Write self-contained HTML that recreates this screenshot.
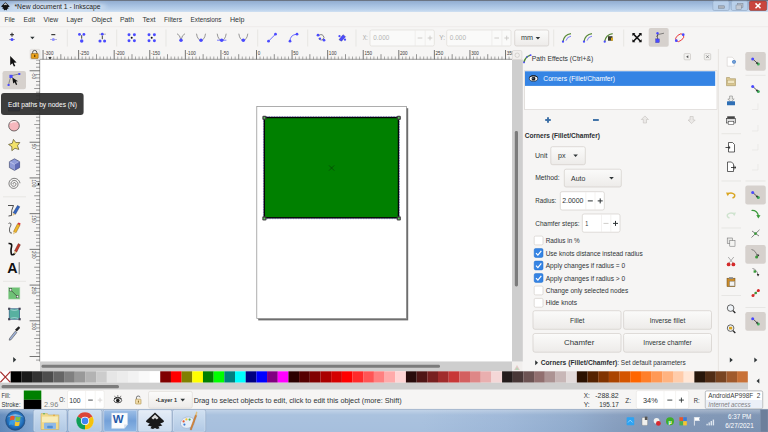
<!DOCTYPE html>
<html lang="en"><head><meta charset="utf-8"><title>*New document 1 - Inkscape</title>
<style>
html,body{margin:0;padding:0;background:#f6f5f4;overflow:hidden}
svg{display:block;font-family:"Liberation Sans",sans-serif}
text{white-space:pre}
</style></head><body>
<svg width="768" height="432" viewBox="0 0 768 432">
<defs>
<linearGradient id="gt" x1="0" y1="0" x2="0" y2="1"><stop offset="0" stop-color="#8ea9cd"/><stop offset="0.4" stop-color="#a3bedf"/><stop offset="0.8" stop-color="#bad1eb"/><stop offset="1" stop-color="#d0e0f2"/></linearGradient>
<linearGradient id="gb" x1="0" y1="0" x2="0" y2="1"><stop offset="0" stop-color="#fbfbfa"/><stop offset="1" stop-color="#edebe9"/></linearGradient>
<linearGradient id="gtb" gradientUnits="userSpaceOnUse" x1="0" y1="0" x2="768" y2="0"><stop offset="0" stop-color="#5f88ba"/><stop offset="0.05" stop-color="#86a9d2"/><stop offset="0.14" stop-color="#a6bfdd"/><stop offset="0.55" stop-color="#a6bfdd"/><stop offset="0.66" stop-color="#9cb6d7"/><stop offset="0.75" stop-color="#8faacc"/><stop offset="0.80" stop-color="#859dbe"/><stop offset="0.84" stop-color="#7f96b6"/><stop offset="1" stop-color="#7a91b1"/></linearGradient>
<linearGradient id="gtbv" x1="0" y1="0" x2="0" y2="1"><stop offset="0" stop-color="#ffffff" stop-opacity="0.35"/><stop offset="0.25" stop-color="#ffffff" stop-opacity="0.05"/><stop offset="1" stop-color="#ffffff" stop-opacity="0"/></linearGradient>
<linearGradient id="gtk" x1="0" y1="0" x2="0" y2="1"><stop offset="0" stop-color="#d4e3f3"/><stop offset="1" stop-color="#b3cbe6"/></linearGradient>
<linearGradient id="gtw" x1="0" y1="0" x2="0" y2="1"><stop offset="0" stop-color="#9dbfe8"/><stop offset="0.5" stop-color="#6f9ed8"/><stop offset="1" stop-color="#8bb6e6"/></linearGradient>
<linearGradient id="gta" x1="0" y1="0" x2="0" y2="1"><stop offset="0" stop-color="#eaf1f9"/><stop offset="1" stop-color="#cfdff1"/></linearGradient>
<radialGradient id="orb" cx="0.5" cy="0.45" r="0.6"><stop offset="0" stop-color="#5fb4ee"/><stop offset="0.7" stop-color="#1f6cb8"/><stop offset="1" stop-color="#123f7a"/></radialGradient>
<filter id="blur" x="-20%" y="-100%" width="140%" height="300%"><feGaussianBlur stdDeviation="2.2"/></filter>
</defs>
<rect x="0.00" y="0.00" width="768.00" height="432.00" fill="#f6f5f4" />
<rect x="0.00" y="0.00" width="768.00" height="12.00" fill="url(#gt)" />
<rect x="0.00" y="0.00" width="768.00" height="0.80" fill="#626872" />
<ellipse cx="57" cy="6.3" rx="50" ry="3.6" fill="#ffffff" opacity="0.55" filter="url(#blur)"/>
<g transform="translate(-1.2 0.6) scale(0.88)">
<path d="M7.5 1.8 L12 6 Q12.6 7 11.5 7.4 L10 7.8 L11.2 9 L9 9.6 L9.6 10.6 L8.4 11 L7.5 10.4 L6.6 11 L5.4 10.6 L6 9.6 L3.8 9 L5 7.8 L3.5 7.4 Q2.4 7 3 6 Z" fill="#151515" />
<path d="M7.5 2.8 L9.4 4.6 L8.4 5.3 L7.5 4.6 L6.6 5.3 L5.6 4.6 Z" fill="#ffffff" opacity="0.8" />
</g>
<text x="14.50" y="8.78" font-size="6.9" fill="#1c1c1c" textLength="86.00" lengthAdjust="spacingAndGlyphs" >*New document 1 - Inkscape</text>
<rect x="712.80" y="1.00" width="16.40" height="9.50" fill="#b9d0ea" rx="1.5" stroke="#8fa6c2" stroke-width="0.6" />
<rect x="718.20" y="5.80" width="6.40" height="2.60" fill="#a9b0ba" stroke="#6f7a8a" stroke-width="0.4" />
<rect x="731.30" y="1.00" width="16.40" height="9.50" fill="#b9d0ea" rx="1.5" stroke="#8fa6c2" stroke-width="0.6" />
<rect x="737.80" y="3.30" width="5.20" height="4.20" fill="#b4bcc7" stroke="#6f7a8a" stroke-width="0.4" />
<rect x="736.00" y="5.00" width="5.20" height="4.20" fill="#c3cad4" stroke="#6f7a8a" stroke-width="0.4" />
<rect x="749.40" y="1.00" width="17.20" height="9.50" fill="#c9453d" rx="1.5" stroke="#8d3a36" stroke-width="0.6" />
<path d="M755.5 3.4 L760.5 8.2 M760.5 3.4 L755.5 8.2" fill="none" stroke="#ffffff" stroke-width="1.5" />
<rect x="0.00" y="12.00" width="768.00" height="15.00" fill="#f6f5f4" />
<text x="4.50" y="21.71" font-size="6.7" fill="#2e3436" textLength="10.50" lengthAdjust="spacingAndGlyphs" >File</text>
<text x="23.50" y="21.71" font-size="6.7" fill="#2e3436" textLength="11.50" lengthAdjust="spacingAndGlyphs" >Edit</text>
<text x="43.50" y="21.71" font-size="6.7" fill="#2e3436" textLength="14.50" lengthAdjust="spacingAndGlyphs" >View</text>
<text x="66.50" y="21.71" font-size="6.7" fill="#2e3436" textLength="16.50" lengthAdjust="spacingAndGlyphs" >Layer</text>
<text x="91.50" y="21.71" font-size="6.7" fill="#2e3436" textLength="20.50" lengthAdjust="spacingAndGlyphs" >Object</text>
<text x="120.00" y="21.71" font-size="6.7" fill="#2e3436" textLength="14.00" lengthAdjust="spacingAndGlyphs" >Path</text>
<text x="142.50" y="21.71" font-size="6.7" fill="#2e3436" textLength="13.00" lengthAdjust="spacingAndGlyphs" >Text</text>
<text x="164.00" y="21.71" font-size="6.7" fill="#2e3436" textLength="18.00" lengthAdjust="spacingAndGlyphs" >Filters</text>
<text x="190.50" y="21.71" font-size="6.7" fill="#2e3436" textLength="31.00" lengthAdjust="spacingAndGlyphs" >Extensions</text>
<text x="230.00" y="21.71" font-size="6.7" fill="#2e3436" textLength="14.50" lengthAdjust="spacingAndGlyphs" >Help</text>
<line x1="0.00" y1="26.70" x2="768.00" y2="26.70" stroke="#e6e3e0" stroke-width="0.5" />
<line x1="9.00" y1="39.50" x2="15.00" y2="39.50" stroke="#6b6b9a" stroke-width="0.6" />
<circle cx="12.00" cy="39.50" r="1.5" fill="#4a4aff"/>
<path d="M12 32.7 V36.7 M10 34.7 H14" fill="none" stroke="#111" stroke-width="0.9" />
<path d="M30.2 36.7 h4.4 l-2.2 2.6 z" fill="#2e3436" />
<line x1="50.00" y1="39.50" x2="57.00" y2="39.50" stroke="#8b8bb8" stroke-width="0.6" />
<circle cx="53.30" cy="39.50" r="1.5" fill="#8f8fff"/>
<line x1="51.30" y1="34.70" x2="55.30" y2="34.70" stroke="#111" stroke-width="1" />
<line x1="67.30" y1="29.50" x2="67.30" y2="46.50" stroke="#dedbd8" stroke-width="0.6" />
<circle cx="79.50" cy="34.40" r="1.426" fill="#4a4aff"/>
<circle cx="83.90" cy="34.40" r="1.426" fill="#4a4aff"/>
<circle cx="81.70" cy="41.00" r="1.736" fill="#4a4aff"/>
<path d="M81.7 35.2 V38.7" fill="none" stroke="#111" stroke-width="0.8" />
<line x1="99.00" y1="34.20" x2="106.00" y2="34.20" stroke="#777" stroke-width="0.5" />
<circle cx="102.30" cy="34.20" r="1.364" fill="#4a4aff"/>
<circle cx="100.00" cy="41.00" r="1.55" fill="#4a4aff"/>
<circle cx="104.60" cy="41.00" r="1.55" fill="#4a4aff"/>
<path d="M102.3 35.7 V39.2" fill="none" stroke="#111" stroke-width="0.8" />
<line x1="116.70" y1="29.50" x2="116.70" y2="46.50" stroke="#dedbd8" stroke-width="0.6" />
<circle cx="129.00" cy="34.70" r="1.488" fill="#4a4aff"/>
<circle cx="129.00" cy="40.70" r="1.488" fill="#4a4aff"/>
<circle cx="134.40" cy="34.70" r="1.488" fill="#4a4aff"/>
<circle cx="134.40" cy="40.70" r="1.488" fill="#4a4aff"/>
<circle cx="131.70" cy="37.70" r="0.992" fill="#111"/>
<circle cx="149.00" cy="34.70" r="1.488" fill="#4a4aff"/>
<circle cx="149.00" cy="40.70" r="1.488" fill="#4a4aff"/>
<circle cx="154.40" cy="34.70" r="1.488" fill="#4a4aff"/>
<circle cx="154.40" cy="40.70" r="1.488" fill="#4a4aff"/>
<circle cx="151.70" cy="37.70" r="0.992" fill="#111"/>
<line x1="166.00" y1="29.50" x2="166.00" y2="46.50" stroke="#dedbd8" stroke-width="0.6" />
<path d="M177 33.7 Q180 34.7 181 40.2 Q182 34.7 185 33.7" fill="none" stroke="#555" stroke-width="0.6" />
<circle cx="181.00" cy="40.20" r="1.736" fill="#4a4aff"/>
<path d="M196.5 33.7 Q197.5 40.2 201 40.2 Q204.5 40.2 205.5 33.7" fill="none" stroke="#555" stroke-width="0.6" />
<circle cx="201.00" cy="40.20" r="1.736" fill="#4a4aff"/>
<path d="M217.2 33.7 Q218.2 40.2 221.7 40.2 Q225.2 40.2 226.2 33.7" fill="none" stroke="#555" stroke-width="0.6" />
<circle cx="221.70" cy="40.20" r="1.736" fill="#4a4aff"/>
<line x1="217.00" y1="40.20" x2="226.40" y2="40.20" stroke="#4a4aff" stroke-width="0.7" />
<path d="M238.8 33.7 Q239.8 40.2 243.3 40.2 Q246.8 40.2 247.8 33.7" fill="none" stroke="#555" stroke-width="0.6" />
<circle cx="243.30" cy="40.20" r="1.736" fill="#4a4aff"/>
<line x1="257.70" y1="29.50" x2="257.70" y2="46.50" stroke="#dedbd8" stroke-width="0.6" />
<path d="M268.5 41.2 L275.5 34.2" fill="none" stroke="#4a4aff" stroke-width="0.8" />
<circle cx="268.50" cy="41.20" r="1.364" fill="#4a4aff"/>
<circle cx="275.50" cy="34.20" r="1.364" fill="#4a4aff"/>
<path d="M290 41.2 Q290 34.7 297 34.2" fill="none" stroke="#4a4aff" stroke-width="0.8" />
<circle cx="290.00" cy="41.20" r="1.364" fill="#4a4aff"/>
<circle cx="297.00" cy="34.20" r="1.364" fill="#4a4aff"/>
<line x1="307.70" y1="29.50" x2="307.70" y2="46.50" stroke="#dedbd8" stroke-width="0.6" />
<path d="M318 35.7 Q323 32.7 324 37.7 Q322 41.7 318.5 38.7" fill="none" stroke="#555" stroke-width="0.7" />
<circle cx="318.00" cy="35.20" r="1.364" fill="#4a4aff"/>
<circle cx="324.00" cy="40.20" r="1.364" fill="#4a4aff"/>
<circle cx="320.00" cy="38.70" r="1.116" fill="#4a4aff"/>
<path d="M339 39.7 L343 34.7 L345.5 36.7 L341.5 41.2 Z" fill="#4a4aff" stroke="#23238a" stroke-width="0.4" />
<circle cx="339.50" cy="36.20" r="1.116" fill="#4a4aff"/>
<circle cx="345.00" cy="39.70" r="1.116" fill="#4a4aff"/>
<line x1="356.00" y1="29.50" x2="356.00" y2="46.50" stroke="#dedbd8" stroke-width="0.6" />
<text x="362.70" y="40.41" font-size="6.7" fill="#a5a6a5" textLength="5.10" lengthAdjust="spacingAndGlyphs" >X:</text>
<rect x="370.00" y="30.00" width="64.30" height="16.00" fill="#fafaf9" rx="1.6" stroke="#dcd8d4" stroke-width="0.6" />
<text x="373.30" y="40.41" font-size="6.7" fill="#b4b5b4" textLength="16.00" lengthAdjust="spacingAndGlyphs" >0.000</text>
<line x1="415.20" y1="30.40" x2="415.20" y2="45.60" stroke="#e4e1de" stroke-width="0.5" />
<line x1="425.20" y1="30.40" x2="425.20" y2="45.60" stroke="#e4e1de" stroke-width="0.5" />
<line x1="417.70" y1="38.00" x2="422.30" y2="38.00" stroke="#c4c2bf" stroke-width="0.8" />
<line x1="427.70" y1="38.00" x2="432.30" y2="38.00" stroke="#c4c2bf" stroke-width="0.8" />
<line x1="430.00" y1="35.70" x2="430.00" y2="40.30" stroke="#c4c2bf" stroke-width="0.8" />
<text x="439.30" y="40.41" font-size="6.7" fill="#a5a6a5" textLength="5.70" lengthAdjust="spacingAndGlyphs" >Y:</text>
<rect x="446.70" y="30.00" width="64.30" height="16.00" fill="#fafaf9" rx="1.6" stroke="#dcd8d4" stroke-width="0.6" />
<text x="449.80" y="40.41" font-size="6.7" fill="#b4b5b4" textLength="16.20" lengthAdjust="spacingAndGlyphs" >0.000</text>
<line x1="491.90" y1="30.40" x2="491.90" y2="45.60" stroke="#e4e1de" stroke-width="0.5" />
<line x1="501.90" y1="30.40" x2="501.90" y2="45.60" stroke="#e4e1de" stroke-width="0.5" />
<line x1="494.40" y1="38.00" x2="499.00" y2="38.00" stroke="#c4c2bf" stroke-width="0.8" />
<line x1="504.40" y1="38.00" x2="509.00" y2="38.00" stroke="#c4c2bf" stroke-width="0.8" />
<line x1="506.70" y1="35.70" x2="506.70" y2="40.30" stroke="#c4c2bf" stroke-width="0.8" />
<rect x="514.70" y="30.00" width="34.00" height="16.00" fill="url(#gb)" rx="1.8" stroke="#cdc7c2" stroke-width="0.6" />
<text x="521.00" y="40.41" font-size="6.7" fill="#2e3436" textLength="12.00" lengthAdjust="spacingAndGlyphs" >mm</text>
<path d="M535.6 36.9 h4.6 l-2.3 2.6 z" fill="#2e3436" />
<line x1="553.70" y1="29.50" x2="553.70" y2="46.50" stroke="#dedbd8" stroke-width="0.6" />
<path d="M563 41.7 Q564 34.7 571 33.7" fill="none" stroke="#5a8a3a" stroke-width="1.3" />
<path d="M566 40.7 Q567 36.7 571 36.2" fill="none" stroke="#4a4aff" stroke-width="0.7" />
<circle cx="563.00" cy="41.70" r="1.116" fill="#4a4aff"/>
<path d="M584 41.7 Q585 34.7 592 33.7" fill="none" stroke="#5a8a3a" stroke-width="1.3" />
<path d="M587 40.7 Q588 36.7 592 36.2" fill="none" stroke="#4a4aff" stroke-width="0.7" />
<circle cx="584.00" cy="41.70" r="1.116" fill="#4a4aff"/>
<path d="M604.7 41.7 Q605.7 34.7 612.7 33.7" fill="none" stroke="#5a8a3a" stroke-width="1.3" />
<rect x="608.00" y="36.20" width="4.50" height="4.50" fill="#3a3a2a" />
<rect x="611.00" y="37.70" width="2.00" height="3.00" fill="#d9a520" />
<circle cx="604.70" cy="41.70" r="1.116" fill="#4a4aff"/>
<line x1="623.70" y1="29.50" x2="623.70" y2="46.50" stroke="#dedbd8" stroke-width="0.6" />
<path d="M633.2 33.900000000000006 L640.8 41.5 M640.8 33.900000000000006 L633.2 41.5" fill="none" stroke="#111" stroke-width="1.5" />
<path d="M632.4000000000001 33.10000000000001 L635.4000000000001 33.10000000000001 L632.4000000000001 36.10000000000001 Z" fill="#111" />
<path d="M632.4000000000001 42.3 L635.4000000000001 42.3 L632.4000000000001 39.3 Z" fill="#111" />
<path d="M641.5999999999999 33.10000000000001 L638.5999999999999 33.10000000000001 L641.5999999999999 36.10000000000001 Z" fill="#111" />
<path d="M641.5999999999999 42.3 L638.5999999999999 42.3 L641.5999999999999 39.3 Z" fill="#111" />
<rect x="648.70" y="28.00" width="20.00" height="18.70" fill="#d6d1cd" rx="2" />
<path d="M656 36.7 Q658 33.7 664 33.2" fill="none" stroke="#444" stroke-width="0.6" />
<line x1="657.50" y1="33.70" x2="657.50" y2="39.70" stroke="#333" stroke-width="0.6" />
<circle cx="657.50" cy="33.20" r="1.2" fill="#4a4aff"/>
<rect x="655.80" y="38.90" width="3.40" height="3.60" fill="#4a4aff" stroke="#2222aa" stroke-width="0.4" />
<ellipse cx="679.7" cy="37.7" rx="4.6" ry="3" fill="none" stroke="#e8363a" stroke-width="0.9" transform="rotate(-40 679.7 37.7)"/>
<circle cx="676.30" cy="40.70" r="1.364" fill="#4a4aff"/>
<circle cx="683.20" cy="34.70" r="1.364" fill="#4a4aff"/>
<rect x="40.00" y="59.50" width="472.00" height="302.00" fill="#ffffff" />
<rect x="40.00" y="49.50" width="472.00" height="10.00" fill="#f6f5f4" />
<rect x="30.00" y="59.50" width="10.00" height="302.00" fill="#f6f5f4" />
<line x1="40.00" y1="59.30" x2="512.00" y2="59.30" stroke="#777" stroke-width="0.7" />
<line x1="39.70" y1="59.50" x2="39.70" y2="361.50" stroke="#777" stroke-width="0.7" />
<line x1="43.05" y1="50.00" x2="43.05" y2="59.40" stroke="#4a4a4a" stroke-width="0.75" />
<text x="44.25" y="54.86" font-size="4.6" fill="#3a3a3a" >-300</text>
<line x1="46.61" y1="56.50" x2="46.61" y2="59.40" stroke="#4a4a4a" stroke-width="0.65" opacity="0.7" />
<line x1="50.16" y1="56.50" x2="50.16" y2="59.40" stroke="#4a4a4a" stroke-width="0.65" opacity="0.7" />
<line x1="53.72" y1="56.50" x2="53.72" y2="59.40" stroke="#4a4a4a" stroke-width="0.65" opacity="0.7" />
<line x1="57.28" y1="56.50" x2="57.28" y2="59.40" stroke="#4a4a4a" stroke-width="0.65" opacity="0.7" />
<line x1="60.84" y1="54.20" x2="60.84" y2="59.40" stroke="#4a4a4a" stroke-width="0.7" opacity="0.85" />
<line x1="64.39" y1="56.50" x2="64.39" y2="59.40" stroke="#4a4a4a" stroke-width="0.65" opacity="0.7" />
<line x1="67.95" y1="56.50" x2="67.95" y2="59.40" stroke="#4a4a4a" stroke-width="0.65" opacity="0.7" />
<line x1="71.51" y1="56.50" x2="71.51" y2="59.40" stroke="#4a4a4a" stroke-width="0.65" opacity="0.7" />
<line x1="75.07" y1="56.50" x2="75.07" y2="59.40" stroke="#4a4a4a" stroke-width="0.65" opacity="0.7" />
<line x1="78.62" y1="50.00" x2="78.62" y2="59.40" stroke="#4a4a4a" stroke-width="0.75" />
<text x="79.83" y="54.86" font-size="4.6" fill="#3a3a3a" >-250</text>
<line x1="82.18" y1="56.50" x2="82.18" y2="59.40" stroke="#4a4a4a" stroke-width="0.65" opacity="0.7" />
<line x1="85.74" y1="56.50" x2="85.74" y2="59.40" stroke="#4a4a4a" stroke-width="0.65" opacity="0.7" />
<line x1="89.30" y1="56.50" x2="89.30" y2="59.40" stroke="#4a4a4a" stroke-width="0.65" opacity="0.7" />
<line x1="92.85" y1="56.50" x2="92.85" y2="59.40" stroke="#4a4a4a" stroke-width="0.65" opacity="0.7" />
<line x1="96.41" y1="54.20" x2="96.41" y2="59.40" stroke="#4a4a4a" stroke-width="0.7" opacity="0.85" />
<line x1="99.97" y1="56.50" x2="99.97" y2="59.40" stroke="#4a4a4a" stroke-width="0.65" opacity="0.7" />
<line x1="103.53" y1="56.50" x2="103.53" y2="59.40" stroke="#4a4a4a" stroke-width="0.65" opacity="0.7" />
<line x1="107.09" y1="56.50" x2="107.09" y2="59.40" stroke="#4a4a4a" stroke-width="0.65" opacity="0.7" />
<line x1="110.64" y1="56.50" x2="110.64" y2="59.40" stroke="#4a4a4a" stroke-width="0.65" opacity="0.7" />
<line x1="114.20" y1="50.00" x2="114.20" y2="59.40" stroke="#4a4a4a" stroke-width="0.75" />
<text x="115.40" y="54.86" font-size="4.6" fill="#3a3a3a" >-200</text>
<line x1="117.76" y1="56.50" x2="117.76" y2="59.40" stroke="#4a4a4a" stroke-width="0.65" opacity="0.7" />
<line x1="121.31" y1="56.50" x2="121.31" y2="59.40" stroke="#4a4a4a" stroke-width="0.65" opacity="0.7" />
<line x1="124.87" y1="56.50" x2="124.87" y2="59.40" stroke="#4a4a4a" stroke-width="0.65" opacity="0.7" />
<line x1="128.43" y1="56.50" x2="128.43" y2="59.40" stroke="#4a4a4a" stroke-width="0.65" opacity="0.7" />
<line x1="131.99" y1="54.20" x2="131.99" y2="59.40" stroke="#4a4a4a" stroke-width="0.7" opacity="0.85" />
<line x1="135.55" y1="56.50" x2="135.55" y2="59.40" stroke="#4a4a4a" stroke-width="0.65" opacity="0.7" />
<line x1="139.10" y1="56.50" x2="139.10" y2="59.40" stroke="#4a4a4a" stroke-width="0.65" opacity="0.7" />
<line x1="142.66" y1="56.50" x2="142.66" y2="59.40" stroke="#4a4a4a" stroke-width="0.65" opacity="0.7" />
<line x1="146.22" y1="56.50" x2="146.22" y2="59.40" stroke="#4a4a4a" stroke-width="0.65" opacity="0.7" />
<line x1="149.77" y1="50.00" x2="149.77" y2="59.40" stroke="#4a4a4a" stroke-width="0.75" />
<text x="150.97" y="54.86" font-size="4.6" fill="#3a3a3a" >-150</text>
<line x1="153.33" y1="56.50" x2="153.33" y2="59.40" stroke="#4a4a4a" stroke-width="0.65" opacity="0.7" />
<line x1="156.89" y1="56.50" x2="156.89" y2="59.40" stroke="#4a4a4a" stroke-width="0.65" opacity="0.7" />
<line x1="160.45" y1="56.50" x2="160.45" y2="59.40" stroke="#4a4a4a" stroke-width="0.65" opacity="0.7" />
<line x1="164.00" y1="56.50" x2="164.00" y2="59.40" stroke="#4a4a4a" stroke-width="0.65" opacity="0.7" />
<line x1="167.56" y1="54.20" x2="167.56" y2="59.40" stroke="#4a4a4a" stroke-width="0.7" opacity="0.85" />
<line x1="171.12" y1="56.50" x2="171.12" y2="59.40" stroke="#4a4a4a" stroke-width="0.65" opacity="0.7" />
<line x1="174.68" y1="56.50" x2="174.68" y2="59.40" stroke="#4a4a4a" stroke-width="0.65" opacity="0.7" />
<line x1="178.24" y1="56.50" x2="178.24" y2="59.40" stroke="#4a4a4a" stroke-width="0.65" opacity="0.7" />
<line x1="181.79" y1="56.50" x2="181.79" y2="59.40" stroke="#4a4a4a" stroke-width="0.65" opacity="0.7" />
<line x1="185.35" y1="50.00" x2="185.35" y2="59.40" stroke="#4a4a4a" stroke-width="0.75" />
<text x="186.55" y="54.86" font-size="4.6" fill="#3a3a3a" >-100</text>
<line x1="188.91" y1="56.50" x2="188.91" y2="59.40" stroke="#4a4a4a" stroke-width="0.65" opacity="0.7" />
<line x1="192.47" y1="56.50" x2="192.47" y2="59.40" stroke="#4a4a4a" stroke-width="0.65" opacity="0.7" />
<line x1="196.02" y1="56.50" x2="196.02" y2="59.40" stroke="#4a4a4a" stroke-width="0.65" opacity="0.7" />
<line x1="199.58" y1="56.50" x2="199.58" y2="59.40" stroke="#4a4a4a" stroke-width="0.65" opacity="0.7" />
<line x1="203.14" y1="54.20" x2="203.14" y2="59.40" stroke="#4a4a4a" stroke-width="0.7" opacity="0.85" />
<line x1="206.69" y1="56.50" x2="206.69" y2="59.40" stroke="#4a4a4a" stroke-width="0.65" opacity="0.7" />
<line x1="210.25" y1="56.50" x2="210.25" y2="59.40" stroke="#4a4a4a" stroke-width="0.65" opacity="0.7" />
<line x1="213.81" y1="56.50" x2="213.81" y2="59.40" stroke="#4a4a4a" stroke-width="0.65" opacity="0.7" />
<line x1="217.37" y1="56.50" x2="217.37" y2="59.40" stroke="#4a4a4a" stroke-width="0.65" opacity="0.7" />
<line x1="220.93" y1="50.00" x2="220.93" y2="59.40" stroke="#4a4a4a" stroke-width="0.75" />
<text x="222.12" y="54.86" font-size="4.6" fill="#3a3a3a" >-50</text>
<line x1="224.48" y1="56.50" x2="224.48" y2="59.40" stroke="#4a4a4a" stroke-width="0.65" opacity="0.7" />
<line x1="228.04" y1="56.50" x2="228.04" y2="59.40" stroke="#4a4a4a" stroke-width="0.65" opacity="0.7" />
<line x1="231.60" y1="56.50" x2="231.60" y2="59.40" stroke="#4a4a4a" stroke-width="0.65" opacity="0.7" />
<line x1="235.16" y1="56.50" x2="235.16" y2="59.40" stroke="#4a4a4a" stroke-width="0.65" opacity="0.7" />
<line x1="238.71" y1="54.20" x2="238.71" y2="59.40" stroke="#4a4a4a" stroke-width="0.7" opacity="0.85" />
<line x1="242.27" y1="56.50" x2="242.27" y2="59.40" stroke="#4a4a4a" stroke-width="0.65" opacity="0.7" />
<line x1="245.83" y1="56.50" x2="245.83" y2="59.40" stroke="#4a4a4a" stroke-width="0.65" opacity="0.7" />
<line x1="249.38" y1="56.50" x2="249.38" y2="59.40" stroke="#4a4a4a" stroke-width="0.65" opacity="0.7" />
<line x1="252.94" y1="56.50" x2="252.94" y2="59.40" stroke="#4a4a4a" stroke-width="0.65" opacity="0.7" />
<line x1="256.50" y1="50.00" x2="256.50" y2="59.40" stroke="#4a4a4a" stroke-width="0.75" />
<text x="257.70" y="54.86" font-size="4.6" fill="#3a3a3a" >0</text>
<line x1="260.06" y1="56.50" x2="260.06" y2="59.40" stroke="#4a4a4a" stroke-width="0.65" opacity="0.7" />
<line x1="263.62" y1="56.50" x2="263.62" y2="59.40" stroke="#4a4a4a" stroke-width="0.65" opacity="0.7" />
<line x1="267.17" y1="56.50" x2="267.17" y2="59.40" stroke="#4a4a4a" stroke-width="0.65" opacity="0.7" />
<line x1="270.73" y1="56.50" x2="270.73" y2="59.40" stroke="#4a4a4a" stroke-width="0.65" opacity="0.7" />
<line x1="274.29" y1="54.20" x2="274.29" y2="59.40" stroke="#4a4a4a" stroke-width="0.7" opacity="0.85" />
<line x1="277.85" y1="56.50" x2="277.85" y2="59.40" stroke="#4a4a4a" stroke-width="0.65" opacity="0.7" />
<line x1="281.40" y1="56.50" x2="281.40" y2="59.40" stroke="#4a4a4a" stroke-width="0.65" opacity="0.7" />
<line x1="284.96" y1="56.50" x2="284.96" y2="59.40" stroke="#4a4a4a" stroke-width="0.65" opacity="0.7" />
<line x1="288.52" y1="56.50" x2="288.52" y2="59.40" stroke="#4a4a4a" stroke-width="0.65" opacity="0.7" />
<line x1="292.07" y1="50.00" x2="292.07" y2="59.40" stroke="#4a4a4a" stroke-width="0.75" />
<text x="293.27" y="54.86" font-size="4.6" fill="#3a3a3a" >50</text>
<line x1="295.63" y1="56.50" x2="295.63" y2="59.40" stroke="#4a4a4a" stroke-width="0.65" opacity="0.7" />
<line x1="299.19" y1="56.50" x2="299.19" y2="59.40" stroke="#4a4a4a" stroke-width="0.65" opacity="0.7" />
<line x1="302.75" y1="56.50" x2="302.75" y2="59.40" stroke="#4a4a4a" stroke-width="0.65" opacity="0.7" />
<line x1="306.31" y1="56.50" x2="306.31" y2="59.40" stroke="#4a4a4a" stroke-width="0.65" opacity="0.7" />
<line x1="309.86" y1="54.20" x2="309.86" y2="59.40" stroke="#4a4a4a" stroke-width="0.7" opacity="0.85" />
<line x1="313.42" y1="56.50" x2="313.42" y2="59.40" stroke="#4a4a4a" stroke-width="0.65" opacity="0.7" />
<line x1="316.98" y1="56.50" x2="316.98" y2="59.40" stroke="#4a4a4a" stroke-width="0.65" opacity="0.7" />
<line x1="320.53" y1="56.50" x2="320.53" y2="59.40" stroke="#4a4a4a" stroke-width="0.65" opacity="0.7" />
<line x1="324.09" y1="56.50" x2="324.09" y2="59.40" stroke="#4a4a4a" stroke-width="0.65" opacity="0.7" />
<line x1="327.65" y1="50.00" x2="327.65" y2="59.40" stroke="#4a4a4a" stroke-width="0.75" />
<text x="328.85" y="54.86" font-size="4.6" fill="#3a3a3a" >100</text>
<line x1="331.21" y1="56.50" x2="331.21" y2="59.40" stroke="#4a4a4a" stroke-width="0.65" opacity="0.7" />
<line x1="334.76" y1="56.50" x2="334.76" y2="59.40" stroke="#4a4a4a" stroke-width="0.65" opacity="0.7" />
<line x1="338.32" y1="56.50" x2="338.32" y2="59.40" stroke="#4a4a4a" stroke-width="0.65" opacity="0.7" />
<line x1="341.88" y1="56.50" x2="341.88" y2="59.40" stroke="#4a4a4a" stroke-width="0.65" opacity="0.7" />
<line x1="345.44" y1="54.20" x2="345.44" y2="59.40" stroke="#4a4a4a" stroke-width="0.7" opacity="0.85" />
<line x1="349.00" y1="56.50" x2="349.00" y2="59.40" stroke="#4a4a4a" stroke-width="0.65" opacity="0.7" />
<line x1="352.55" y1="56.50" x2="352.55" y2="59.40" stroke="#4a4a4a" stroke-width="0.65" opacity="0.7" />
<line x1="356.11" y1="56.50" x2="356.11" y2="59.40" stroke="#4a4a4a" stroke-width="0.65" opacity="0.7" />
<line x1="359.67" y1="56.50" x2="359.67" y2="59.40" stroke="#4a4a4a" stroke-width="0.65" opacity="0.7" />
<line x1="363.23" y1="50.00" x2="363.23" y2="59.40" stroke="#4a4a4a" stroke-width="0.75" />
<text x="364.43" y="54.86" font-size="4.6" fill="#3a3a3a" >150</text>
<line x1="366.78" y1="56.50" x2="366.78" y2="59.40" stroke="#4a4a4a" stroke-width="0.65" opacity="0.7" />
<line x1="370.34" y1="56.50" x2="370.34" y2="59.40" stroke="#4a4a4a" stroke-width="0.65" opacity="0.7" />
<line x1="373.90" y1="56.50" x2="373.90" y2="59.40" stroke="#4a4a4a" stroke-width="0.65" opacity="0.7" />
<line x1="377.45" y1="56.50" x2="377.45" y2="59.40" stroke="#4a4a4a" stroke-width="0.65" opacity="0.7" />
<line x1="381.01" y1="54.20" x2="381.01" y2="59.40" stroke="#4a4a4a" stroke-width="0.7" opacity="0.85" />
<line x1="384.57" y1="56.50" x2="384.57" y2="59.40" stroke="#4a4a4a" stroke-width="0.65" opacity="0.7" />
<line x1="388.13" y1="56.50" x2="388.13" y2="59.40" stroke="#4a4a4a" stroke-width="0.65" opacity="0.7" />
<line x1="391.69" y1="56.50" x2="391.69" y2="59.40" stroke="#4a4a4a" stroke-width="0.65" opacity="0.7" />
<line x1="395.24" y1="56.50" x2="395.24" y2="59.40" stroke="#4a4a4a" stroke-width="0.65" opacity="0.7" />
<line x1="398.80" y1="50.00" x2="398.80" y2="59.40" stroke="#4a4a4a" stroke-width="0.75" />
<text x="400.00" y="54.86" font-size="4.6" fill="#3a3a3a" >200</text>
<line x1="402.36" y1="56.50" x2="402.36" y2="59.40" stroke="#4a4a4a" stroke-width="0.65" opacity="0.7" />
<line x1="405.91" y1="56.50" x2="405.91" y2="59.40" stroke="#4a4a4a" stroke-width="0.65" opacity="0.7" />
<line x1="409.47" y1="56.50" x2="409.47" y2="59.40" stroke="#4a4a4a" stroke-width="0.65" opacity="0.7" />
<line x1="413.03" y1="56.50" x2="413.03" y2="59.40" stroke="#4a4a4a" stroke-width="0.65" opacity="0.7" />
<line x1="416.59" y1="54.20" x2="416.59" y2="59.40" stroke="#4a4a4a" stroke-width="0.7" opacity="0.85" />
<line x1="420.14" y1="56.50" x2="420.14" y2="59.40" stroke="#4a4a4a" stroke-width="0.65" opacity="0.7" />
<line x1="423.70" y1="56.50" x2="423.70" y2="59.40" stroke="#4a4a4a" stroke-width="0.65" opacity="0.7" />
<line x1="427.26" y1="56.50" x2="427.26" y2="59.40" stroke="#4a4a4a" stroke-width="0.65" opacity="0.7" />
<line x1="430.82" y1="56.50" x2="430.82" y2="59.40" stroke="#4a4a4a" stroke-width="0.65" opacity="0.7" />
<line x1="434.38" y1="50.00" x2="434.38" y2="59.40" stroke="#4a4a4a" stroke-width="0.75" />
<text x="435.57" y="54.86" font-size="4.6" fill="#3a3a3a" >250</text>
<line x1="437.93" y1="56.50" x2="437.93" y2="59.40" stroke="#4a4a4a" stroke-width="0.65" opacity="0.7" />
<line x1="441.49" y1="56.50" x2="441.49" y2="59.40" stroke="#4a4a4a" stroke-width="0.65" opacity="0.7" />
<line x1="445.05" y1="56.50" x2="445.05" y2="59.40" stroke="#4a4a4a" stroke-width="0.65" opacity="0.7" />
<line x1="448.61" y1="56.50" x2="448.61" y2="59.40" stroke="#4a4a4a" stroke-width="0.65" opacity="0.7" />
<line x1="452.16" y1="54.20" x2="452.16" y2="59.40" stroke="#4a4a4a" stroke-width="0.7" opacity="0.85" />
<line x1="455.72" y1="56.50" x2="455.72" y2="59.40" stroke="#4a4a4a" stroke-width="0.65" opacity="0.7" />
<line x1="459.28" y1="56.50" x2="459.28" y2="59.40" stroke="#4a4a4a" stroke-width="0.65" opacity="0.7" />
<line x1="462.84" y1="56.50" x2="462.84" y2="59.40" stroke="#4a4a4a" stroke-width="0.65" opacity="0.7" />
<line x1="466.39" y1="56.50" x2="466.39" y2="59.40" stroke="#4a4a4a" stroke-width="0.65" opacity="0.7" />
<line x1="469.95" y1="50.00" x2="469.95" y2="59.40" stroke="#4a4a4a" stroke-width="0.75" />
<text x="471.15" y="54.86" font-size="4.6" fill="#3a3a3a" >300</text>
<line x1="473.51" y1="56.50" x2="473.51" y2="59.40" stroke="#4a4a4a" stroke-width="0.65" opacity="0.7" />
<line x1="477.06" y1="56.50" x2="477.06" y2="59.40" stroke="#4a4a4a" stroke-width="0.65" opacity="0.7" />
<line x1="480.62" y1="56.50" x2="480.62" y2="59.40" stroke="#4a4a4a" stroke-width="0.65" opacity="0.7" />
<line x1="484.18" y1="56.50" x2="484.18" y2="59.40" stroke="#4a4a4a" stroke-width="0.65" opacity="0.7" />
<line x1="487.74" y1="54.20" x2="487.74" y2="59.40" stroke="#4a4a4a" stroke-width="0.7" opacity="0.85" />
<line x1="491.30" y1="56.50" x2="491.30" y2="59.40" stroke="#4a4a4a" stroke-width="0.65" opacity="0.7" />
<line x1="494.85" y1="56.50" x2="494.85" y2="59.40" stroke="#4a4a4a" stroke-width="0.65" opacity="0.7" />
<line x1="498.41" y1="56.50" x2="498.41" y2="59.40" stroke="#4a4a4a" stroke-width="0.65" opacity="0.7" />
<line x1="501.97" y1="56.50" x2="501.97" y2="59.40" stroke="#4a4a4a" stroke-width="0.65" opacity="0.7" />
<line x1="505.52" y1="50.00" x2="505.52" y2="59.40" stroke="#4a4a4a" stroke-width="0.75" />
<text x="506.72" y="54.86" font-size="4.6" fill="#3a3a3a" >350</text>
<line x1="509.08" y1="56.50" x2="509.08" y2="59.40" stroke="#4a4a4a" stroke-width="0.65" opacity="0.7" />
<line x1="36.00" y1="60.07" x2="39.90" y2="60.07" stroke="#4a4a4a" stroke-width="0.7" opacity="0.75" />
<line x1="36.00" y1="63.64" x2="39.90" y2="63.64" stroke="#4a4a4a" stroke-width="0.7" opacity="0.75" />
<line x1="36.00" y1="67.21" x2="39.90" y2="67.21" stroke="#4a4a4a" stroke-width="0.7" opacity="0.75" />
<line x1="29.60" y1="70.78" x2="39.90" y2="70.78" stroke="#4a4a4a" stroke-width="0.75" />
<line x1="36.00" y1="74.36" x2="39.90" y2="74.36" stroke="#4a4a4a" stroke-width="0.7" opacity="0.75" />
<line x1="36.00" y1="77.93" x2="39.90" y2="77.93" stroke="#4a4a4a" stroke-width="0.7" opacity="0.75" />
<line x1="36.00" y1="81.50" x2="39.90" y2="81.50" stroke="#4a4a4a" stroke-width="0.7" opacity="0.75" />
<line x1="36.00" y1="85.07" x2="39.90" y2="85.07" stroke="#4a4a4a" stroke-width="0.7" opacity="0.75" />
<line x1="34.20" y1="88.64" x2="39.90" y2="88.64" stroke="#4a4a4a" stroke-width="0.7" opacity="0.85" />
<line x1="36.00" y1="92.21" x2="39.90" y2="92.21" stroke="#4a4a4a" stroke-width="0.7" opacity="0.75" />
<line x1="36.00" y1="95.79" x2="39.90" y2="95.79" stroke="#4a4a4a" stroke-width="0.7" opacity="0.75" />
<line x1="36.00" y1="99.36" x2="39.90" y2="99.36" stroke="#4a4a4a" stroke-width="0.7" opacity="0.75" />
<line x1="36.00" y1="102.93" x2="39.90" y2="102.93" stroke="#4a4a4a" stroke-width="0.7" opacity="0.75" />
<line x1="29.60" y1="106.50" x2="39.90" y2="106.50" stroke="#4a4a4a" stroke-width="0.75" />
<line x1="36.00" y1="110.07" x2="39.90" y2="110.07" stroke="#4a4a4a" stroke-width="0.7" opacity="0.75" />
<line x1="36.00" y1="113.64" x2="39.90" y2="113.64" stroke="#4a4a4a" stroke-width="0.7" opacity="0.75" />
<line x1="36.00" y1="117.21" x2="39.90" y2="117.21" stroke="#4a4a4a" stroke-width="0.7" opacity="0.75" />
<line x1="36.00" y1="120.79" x2="39.90" y2="120.79" stroke="#4a4a4a" stroke-width="0.7" opacity="0.75" />
<line x1="34.20" y1="124.36" x2="39.90" y2="124.36" stroke="#4a4a4a" stroke-width="0.7" opacity="0.85" />
<line x1="36.00" y1="127.93" x2="39.90" y2="127.93" stroke="#4a4a4a" stroke-width="0.7" opacity="0.75" />
<line x1="36.00" y1="131.50" x2="39.90" y2="131.50" stroke="#4a4a4a" stroke-width="0.7" opacity="0.75" />
<line x1="36.00" y1="135.07" x2="39.90" y2="135.07" stroke="#4a4a4a" stroke-width="0.7" opacity="0.75" />
<line x1="36.00" y1="138.64" x2="39.90" y2="138.64" stroke="#4a4a4a" stroke-width="0.7" opacity="0.75" />
<line x1="29.60" y1="142.22" x2="39.90" y2="142.22" stroke="#4a4a4a" stroke-width="0.75" />
<line x1="36.00" y1="145.79" x2="39.90" y2="145.79" stroke="#4a4a4a" stroke-width="0.7" opacity="0.75" />
<line x1="36.00" y1="149.36" x2="39.90" y2="149.36" stroke="#4a4a4a" stroke-width="0.7" opacity="0.75" />
<line x1="36.00" y1="152.93" x2="39.90" y2="152.93" stroke="#4a4a4a" stroke-width="0.7" opacity="0.75" />
<line x1="36.00" y1="156.50" x2="39.90" y2="156.50" stroke="#4a4a4a" stroke-width="0.7" opacity="0.75" />
<line x1="34.20" y1="160.07" x2="39.90" y2="160.07" stroke="#4a4a4a" stroke-width="0.7" opacity="0.85" />
<line x1="36.00" y1="163.64" x2="39.90" y2="163.64" stroke="#4a4a4a" stroke-width="0.7" opacity="0.75" />
<line x1="36.00" y1="167.22" x2="39.90" y2="167.22" stroke="#4a4a4a" stroke-width="0.7" opacity="0.75" />
<line x1="36.00" y1="170.79" x2="39.90" y2="170.79" stroke="#4a4a4a" stroke-width="0.7" opacity="0.75" />
<line x1="36.00" y1="174.36" x2="39.90" y2="174.36" stroke="#4a4a4a" stroke-width="0.7" opacity="0.75" />
<line x1="29.60" y1="177.93" x2="39.90" y2="177.93" stroke="#4a4a4a" stroke-width="0.75" />
<line x1="36.00" y1="181.50" x2="39.90" y2="181.50" stroke="#4a4a4a" stroke-width="0.7" opacity="0.75" />
<line x1="36.00" y1="185.07" x2="39.90" y2="185.07" stroke="#4a4a4a" stroke-width="0.7" opacity="0.75" />
<line x1="36.00" y1="188.64" x2="39.90" y2="188.64" stroke="#4a4a4a" stroke-width="0.7" opacity="0.75" />
<line x1="36.00" y1="192.22" x2="39.90" y2="192.22" stroke="#4a4a4a" stroke-width="0.7" opacity="0.75" />
<line x1="34.20" y1="195.79" x2="39.90" y2="195.79" stroke="#4a4a4a" stroke-width="0.7" opacity="0.85" />
<line x1="36.00" y1="199.36" x2="39.90" y2="199.36" stroke="#4a4a4a" stroke-width="0.7" opacity="0.75" />
<line x1="36.00" y1="202.93" x2="39.90" y2="202.93" stroke="#4a4a4a" stroke-width="0.7" opacity="0.75" />
<line x1="36.00" y1="206.50" x2="39.90" y2="206.50" stroke="#4a4a4a" stroke-width="0.7" opacity="0.75" />
<line x1="36.00" y1="210.07" x2="39.90" y2="210.07" stroke="#4a4a4a" stroke-width="0.7" opacity="0.75" />
<line x1="29.60" y1="213.65" x2="39.90" y2="213.65" stroke="#4a4a4a" stroke-width="0.75" />
<line x1="36.00" y1="217.22" x2="39.90" y2="217.22" stroke="#4a4a4a" stroke-width="0.7" opacity="0.75" />
<line x1="36.00" y1="220.79" x2="39.90" y2="220.79" stroke="#4a4a4a" stroke-width="0.7" opacity="0.75" />
<line x1="36.00" y1="224.36" x2="39.90" y2="224.36" stroke="#4a4a4a" stroke-width="0.7" opacity="0.75" />
<line x1="36.00" y1="227.93" x2="39.90" y2="227.93" stroke="#4a4a4a" stroke-width="0.7" opacity="0.75" />
<line x1="34.20" y1="231.50" x2="39.90" y2="231.50" stroke="#4a4a4a" stroke-width="0.7" opacity="0.85" />
<line x1="36.00" y1="235.07" x2="39.90" y2="235.07" stroke="#4a4a4a" stroke-width="0.7" opacity="0.75" />
<line x1="36.00" y1="238.65" x2="39.90" y2="238.65" stroke="#4a4a4a" stroke-width="0.7" opacity="0.75" />
<line x1="36.00" y1="242.22" x2="39.90" y2="242.22" stroke="#4a4a4a" stroke-width="0.7" opacity="0.75" />
<line x1="36.00" y1="245.79" x2="39.90" y2="245.79" stroke="#4a4a4a" stroke-width="0.7" opacity="0.75" />
<line x1="29.60" y1="249.36" x2="39.90" y2="249.36" stroke="#4a4a4a" stroke-width="0.75" />
<line x1="36.00" y1="252.93" x2="39.90" y2="252.93" stroke="#4a4a4a" stroke-width="0.7" opacity="0.75" />
<line x1="36.00" y1="256.50" x2="39.90" y2="256.50" stroke="#4a4a4a" stroke-width="0.7" opacity="0.75" />
<line x1="36.00" y1="260.07" x2="39.90" y2="260.07" stroke="#4a4a4a" stroke-width="0.7" opacity="0.75" />
<line x1="36.00" y1="263.65" x2="39.90" y2="263.65" stroke="#4a4a4a" stroke-width="0.7" opacity="0.75" />
<line x1="34.20" y1="267.22" x2="39.90" y2="267.22" stroke="#4a4a4a" stroke-width="0.7" opacity="0.85" />
<line x1="36.00" y1="270.79" x2="39.90" y2="270.79" stroke="#4a4a4a" stroke-width="0.7" opacity="0.75" />
<line x1="36.00" y1="274.36" x2="39.90" y2="274.36" stroke="#4a4a4a" stroke-width="0.7" opacity="0.75" />
<line x1="36.00" y1="277.93" x2="39.90" y2="277.93" stroke="#4a4a4a" stroke-width="0.7" opacity="0.75" />
<line x1="36.00" y1="281.50" x2="39.90" y2="281.50" stroke="#4a4a4a" stroke-width="0.7" opacity="0.75" />
<line x1="29.60" y1="285.08" x2="39.90" y2="285.08" stroke="#4a4a4a" stroke-width="0.75" />
<line x1="36.00" y1="288.65" x2="39.90" y2="288.65" stroke="#4a4a4a" stroke-width="0.7" opacity="0.75" />
<line x1="36.00" y1="292.22" x2="39.90" y2="292.22" stroke="#4a4a4a" stroke-width="0.7" opacity="0.75" />
<line x1="36.00" y1="295.79" x2="39.90" y2="295.79" stroke="#4a4a4a" stroke-width="0.7" opacity="0.75" />
<line x1="36.00" y1="299.36" x2="39.90" y2="299.36" stroke="#4a4a4a" stroke-width="0.7" opacity="0.75" />
<line x1="34.20" y1="302.93" x2="39.90" y2="302.93" stroke="#4a4a4a" stroke-width="0.7" opacity="0.85" />
<line x1="36.00" y1="306.50" x2="39.90" y2="306.50" stroke="#4a4a4a" stroke-width="0.7" opacity="0.75" />
<line x1="36.00" y1="310.08" x2="39.90" y2="310.08" stroke="#4a4a4a" stroke-width="0.7" opacity="0.75" />
<line x1="36.00" y1="313.65" x2="39.90" y2="313.65" stroke="#4a4a4a" stroke-width="0.7" opacity="0.75" />
<line x1="36.00" y1="317.22" x2="39.90" y2="317.22" stroke="#4a4a4a" stroke-width="0.7" opacity="0.75" />
<line x1="29.60" y1="320.79" x2="39.90" y2="320.79" stroke="#4a4a4a" stroke-width="0.75" />
<line x1="36.00" y1="324.36" x2="39.90" y2="324.36" stroke="#4a4a4a" stroke-width="0.7" opacity="0.75" />
<line x1="36.00" y1="327.93" x2="39.90" y2="327.93" stroke="#4a4a4a" stroke-width="0.7" opacity="0.75" />
<line x1="36.00" y1="331.50" x2="39.90" y2="331.50" stroke="#4a4a4a" stroke-width="0.7" opacity="0.75" />
<line x1="36.00" y1="335.08" x2="39.90" y2="335.08" stroke="#4a4a4a" stroke-width="0.7" opacity="0.75" />
<line x1="34.20" y1="338.65" x2="39.90" y2="338.65" stroke="#4a4a4a" stroke-width="0.7" opacity="0.85" />
<line x1="36.00" y1="342.22" x2="39.90" y2="342.22" stroke="#4a4a4a" stroke-width="0.7" opacity="0.75" />
<line x1="36.00" y1="345.79" x2="39.90" y2="345.79" stroke="#4a4a4a" stroke-width="0.7" opacity="0.75" />
<line x1="36.00" y1="349.36" x2="39.90" y2="349.36" stroke="#4a4a4a" stroke-width="0.7" opacity="0.75" />
<line x1="36.00" y1="352.93" x2="39.90" y2="352.93" stroke="#4a4a4a" stroke-width="0.7" opacity="0.75" />
<line x1="29.60" y1="356.50" x2="39.90" y2="356.50" stroke="#4a4a4a" stroke-width="0.75" />
<line x1="36.00" y1="360.08" x2="39.90" y2="360.08" stroke="#4a4a4a" stroke-width="0.7" opacity="0.75" />
<text transform="translate(31.9 72.38) rotate(90)" font-size="4.6" fill="#3a3a3a">-50</text>
<text transform="translate(31.9 108.10) rotate(90)" font-size="4.6" fill="#3a3a3a">0</text>
<text transform="translate(31.9 143.81) rotate(90)" font-size="4.6" fill="#3a3a3a">50</text>
<text transform="translate(31.9 179.53) rotate(90)" font-size="4.6" fill="#3a3a3a">100</text>
<text transform="translate(31.9 215.25) rotate(90)" font-size="4.6" fill="#3a3a3a">150</text>
<text transform="translate(31.9 250.96) rotate(90)" font-size="4.6" fill="#3a3a3a">200</text>
<text transform="translate(31.9 286.68) rotate(90)" font-size="4.6" fill="#3a3a3a">250</text>
<text transform="translate(31.9 322.39) rotate(90)" font-size="4.6" fill="#3a3a3a">300</text>
<path d="M48.3 57.2 h3.4 l-1.7 2 z" fill="#111" />
<path d="M37.8 182.4 v3.4 l2 -1.7 z" fill="#111" />
<rect x="30.20" y="49.40" width="9.70" height="10.10" fill="#efedeb" rx="1.2" stroke="#d0ccc8" stroke-width="0.5" />
<path d="M32.6 54 V52.4 Q32.6 50.4 34.7 50.4 Q36.8 50.4 36.8 52.4 V54" fill="none" stroke="#5a5a5a" stroke-width="1.0" />
<rect x="31.20" y="53.40" width="7.00" height="5.00" fill="#eaa21c" rx="0.5" stroke="#7a4f06" stroke-width="0.5" />
<rect x="34.20" y="54.80" width="1.10" height="2.20" fill="#4a2f03" />
<rect x="258.20" y="108.20" width="150.00" height="212.20" fill="#6e6e6e" />
<rect x="256.80" y="106.60" width="149.60" height="212.00" fill="#ffffff" stroke="#8a8a8a" stroke-width="0.7" />
<rect x="264.30" y="117.50" width="134.20" height="100.30" fill="#008000" stroke="#050505" stroke-width="1.45" />
<rect x="263.45" y="116.65" width="135.95" height="102.00" fill="none" stroke="#3434b0" stroke-width="0.5" stroke-dasharray="1.3 1.3"/>
<rect x="262.30" y="115.70" width="4.20" height="4.20" fill="#3c3c3c" rx="1.2" opacity="0.92" />
<circle cx="264.40" cy="117.80" r="0.9" fill="#5fd35f"/>
<rect x="396.70" y="115.70" width="4.20" height="4.20" fill="#3c3c3c" rx="1.2" opacity="0.92" />
<circle cx="398.80" cy="117.80" r="0.9" fill="#5fd35f"/>
<rect x="262.30" y="216.30" width="4.20" height="4.20" fill="#3c3c3c" rx="1.2" opacity="0.92" />
<circle cx="264.40" cy="218.40" r="0.9" fill="#5fd35f"/>
<rect x="396.70" y="216.30" width="4.20" height="4.20" fill="#3c3c3c" rx="1.2" opacity="0.92" />
<circle cx="398.80" cy="218.40" r="0.9" fill="#5fd35f"/>
<path d="M329.0 165.4 l5.2 5.2 m0 -5.2 l-5.2 5.2" fill="none" stroke="#0a300a" stroke-width="0.55" />
<rect x="512.00" y="59.50" width="10.80" height="302.00" fill="#cecece" />
<rect x="514.80" y="131.00" width="3.20" height="155.50" fill="#7c7c7c" rx="1.4" />
<rect x="512.30" y="50.50" width="9.60" height="9.00" fill="#f1efed" rx="1.5" stroke="#cfcbc7" stroke-width="0.5" />
<circle cx="517.20" cy="55.20" r="2.2" fill="none" stroke="#b9b6b2" stroke-width="0.5"/>
<rect x="40.00" y="361.50" width="472.00" height="9.80" fill="#cecece" />
<rect x="41.50" y="364.80" width="398.50" height="3.00" fill="#7c7c7c" rx="1.4" />
<rect x="512.00" y="362.00" width="10.50" height="9.30" fill="#f1efed" />
<path d="M514 370 l3 -5 l3 5 z" fill="#e7c9c9" />
<path d="M515 370 l2 -3 l2 3 z" fill="#b9d7b9" />
<path d="M10.2 56 L10.2 65.2 L12.3 63.3 L13.9 66.6 L15.3 65.9 L13.8 62.7 L16.6 62.5 Z" fill="#111" />
<rect x="2.50" y="71.00" width="23.50" height="18.20" fill="#d6d1cd" rx="2.2" />
<path d="M11 76.5 Q11 75.5 19 74" fill="none" stroke="#555" stroke-width="0.6" />
<path d="M11 76.5 Q9.5 80 8.5 85" fill="none" stroke="#555" stroke-width="0.6" />
<rect x="9.40" y="74.80" width="3.20" height="3.20" fill="#4a4aff" />
<rect x="18.30" y="73.00" width="2.00" height="2.00" fill="#4a4aff" />
<rect x="7.60" y="84.00" width="2.00" height="2.00" fill="#4a4aff" />
<path d="M12.3 77.6 L18 81.2 L15.9 81.6 L17.2 84.6 L16 85.1 L14.7 82.2 L13.2 83.6 Z" fill="#111" />
<rect x="8.50" y="102.00" width="11.00" height="9.00" fill="#6a7fd8" stroke="#222" stroke-width="0.6" />
<circle cx="14.00" cy="125.70" r="5.3" fill="#f6b7bd" stroke="#3a3a3a" stroke-width="0.7"/>
<path d="M10.5 123 Q13 120.8 16.5 122" fill="none" stroke="#ffffff" stroke-width="1.2" opacity="0.8" />
<path d="M13.46 139.39 L15.82 142.60 L19.80 142.48 L17.47 145.72 L18.82 149.47 L15.02 148.25 L11.87 150.69 L11.85 146.71 L8.56 144.46 L12.34 143.22 Z" fill="#f3e36b" stroke="#5a5226" stroke-width="0.7" />
<path d="M14.5 158.8 L19.6 161.6 L19.6 167.6 L14.5 170.4 L9.4 167.6 L9.4 161.6 Z" fill="#8f9bd8" stroke="#33395e" stroke-width="0.6" />
<path d="M9.4 161.6 L14.5 164.4 L19.6 161.6 M14.5 164.4 V170.4" fill="none" stroke="#e6e9fb" stroke-width="0.5" />
<path d="M14.5 164.4 L19.6 161.6 L19.6 167.6 L14.5 170.4 Z" fill="#4c59a8" opacity="0.7" />
<path d="M13.56 184.31 L13.45 184.26 L13.35 184.19 L13.26 184.09 L13.19 183.97 L13.13 183.83 L13.10 183.68 L13.10 183.52 L13.13 183.35 L13.19 183.18 L13.28 183.01 L13.41 182.86 L13.57 182.73 L13.76 182.62 L13.97 182.54 L14.19 182.50 L14.43 182.50 L14.68 182.54 L14.92 182.63 L15.16 182.76 L15.37 182.93 L15.56 183.14 L15.71 183.39 L15.83 183.67 L15.89 183.97 L15.91 184.29 L15.87 184.61 L15.78 184.94 L15.63 185.25 L15.42 185.53 L15.17 185.79 L14.86 186.00 L14.52 186.17 L14.15 186.28 L13.76 186.32 L13.35 186.30 L12.95 186.22 L12.55 186.06 L12.18 185.83 L11.85 185.55 L11.57 185.20 L11.34 184.80 L11.17 184.37 L11.08 183.90 L11.06 183.42 L11.13 182.93 L11.28 182.45 L11.51 181.99 L11.81 181.57 L12.19 181.20 L12.63 180.90 L13.12 180.66 L13.66 180.51 L14.22 180.44 L14.79 180.47 L15.36 180.60 L15.90 180.82 L16.41 181.13 L16.88 181.52 L17.27 181.99 L17.59 182.53 L17.82 183.12 L17.95 183.75 L17.97 184.40 L17.89 185.06 L17.70 185.70 L17.40 186.30 L17.00 186.86 L16.51 187.36 L15.94 187.77 L15.30 188.08 L14.61 188.29 L13.89 188.39 L13.15 188.36 L12.42 188.21 L11.71 187.95 L11.05 187.56 L10.45 187.07 L9.94 186.48 L9.52 185.81 L9.22 185.06 L9.04 184.28 L8.99 183.46 L9.08 182.64 L9.30 181.83 L9.65 181.06 L10.13 180.36 L10.73 179.73 L11.42 179.21 L12.20 178.80 L13.04 178.52 L13.93 178.39 L14.84 178.40 L15.74 178.55 L16.61 178.86 L17.43 179.31 L18.17 179.89 L18.81 180.59 L19.33 181.39 L19.72 182.28 L19.96 183.22" fill="none" stroke="#444" stroke-width="0.7" />
<line x1="3.00" y1="196.80" x2="26.00" y2="196.80" stroke="#dedbd8" stroke-width="0.6" />
<path d="M8 205.5 H13.5 Q11 210 11.5 215.5 L8.5 216" fill="none" stroke="#222" stroke-width="0.8" />
<path d="M13 213 L17.5 205.5 L19.8 206.8 L15.5 214.3 Z" fill="#3465c0" stroke="#1b2d5c" stroke-width="0.4" />
<path d="M13 213 L15.5 214.3 L12.6 216 Z" fill="#e8c98a" />
<path d="M8.5 223.5 Q11 222 11 225 Q9 228 9.5 231 Q10 234 12 233" fill="none" stroke="#222" stroke-width="0.7" />
<path d="M13.5 231.5 L17.5 223.8 L20 225.2 L16 232.8 Z" fill="#f0b629" stroke="#6b4a09" stroke-width="0.4" />
<path d="M13.5 231.5 L16 232.8 L13 234.6 Z" fill="#e8c98a" />
<path d="M17.5 223.8 L20 225.2 L20.6 223.6 L18.6 222.4 Z" fill="#d33" />
<path d="M8.5 243.5 Q12.5 243 11.5 247 Q10.5 251 11.5 254.5 Q13.5 255.5 15 253" fill="none" stroke="#111" stroke-width="1.6" />
<path d="M14.5 251 L18.3 243.6 L20.4 244.8 L16.6 252.2 Z" fill="#c0392b" stroke="#4a1a12" stroke-width="0.4" />
<path d="M14.5 251 L16.6 252.2 L14 254 Z" fill="#e8c98a" />
<text x="7.20" y="273.42" font-size="14.5" fill="#111" textLength="10.30" lengthAdjust="spacingAndGlyphs" font-weight="bold" >A</text>
<line x1="19.20" y1="262.20" x2="19.20" y2="274.30" stroke="#444" stroke-width="0.8" />
<line x1="3.00" y1="281.30" x2="26.00" y2="281.30" stroke="#dedbd8" stroke-width="0.6" />
<rect x="8.30" y="287.50" width="11.60" height="11.60" fill="#6fc276" stroke="#b7ddb9" stroke-width="0.5" />
<path d="M10.6 289.8 L17.4 296.6" fill="none" stroke="#333" stroke-width="0.6" />
<rect x="9.60" y="288.80" width="2.20" height="2.20" fill="#eee" stroke="#333" stroke-width="0.4" />
<rect x="16.40" y="295.60" width="2.20" height="2.20" fill="#eee" stroke="#333" stroke-width="0.4" />
<rect x="9.20" y="308.80" width="10.40" height="10.40" fill="#58b0a0" stroke="#2d5b86" stroke-width="0.7" />
<path d="M9.2 308.8 Q14.4 312 19.6 308.8 M9.2 319.2 Q14.4 316 19.6 319.2" fill="none" stroke="#e8f3ff" stroke-width="0.5" />
<rect x="8.10" y="307.70" width="2.20" height="2.20" fill="#445" />
<rect x="18.50" y="307.70" width="2.20" height="2.20" fill="#445" />
<rect x="8.10" y="318.10" width="2.20" height="2.20" fill="#445" />
<rect x="18.50" y="318.10" width="2.20" height="2.20" fill="#445" />
<path d="M9.5 338.5 L15.2 331.2 L16.8 332.6 L11 339.8 L9.2 340.2 Z" fill="#9fb2d8" stroke="#333" stroke-width="0.5" />
<path d="M15 329.8 L18.3 326.4 Q20.2 326.2 19.9 328.2 L16.8 331.4 Z" fill="#222" />
<path d="M13.2 357 v5.4 l3 -2.7 z" fill="#2e3436" />
<path d="M524 62.5 Q525 57 530.5 55.2" fill="none" stroke="#4f8a36" stroke-width="1.4" />
<rect x="523.20" y="61.60" width="1.60" height="1.60" fill="#4a4aff" />
<rect x="529.80" y="54.40" width="1.60" height="1.60" fill="#4a4aff" />
<rect x="526.20" y="56.20" width="1.40" height="1.40" fill="#4a4aff" />
<text x="531.70" y="61.11" font-size="6.7" fill="#2e3436" textLength="61.50" lengthAdjust="spacingAndGlyphs" >Path Effects (Ctrl+&amp;)</text>
<rect x="684.10" y="53.60" width="6.40" height="6.20" fill="#f3f2f0" rx="0.8" stroke="#b8b4b0" stroke-width="0.5" />
<path d="M688.3 55.2 L686.0999999999999 56.7 L688.3 58.2 Z" fill="#555" />
<rect x="704.30" y="53.60" width="6.40" height="6.20" fill="#f3f2f0" rx="0.8" stroke="#b8b4b0" stroke-width="0.5" />
<path d="M706.1 55.3 l2.8 2.8 m0 -2.8 l-2.8 2.8" fill="none" stroke="#555" stroke-width="0.6" />
<rect x="524.60" y="70.80" width="192.40" height="38.80" fill="#ffffff" stroke="#d5d0cc" stroke-width="0.6" />
<rect x="525.00" y="71.30" width="190.20" height="14.60" fill="#3584e4" />
<ellipse cx="533.5" cy="78.6" rx="4.2" ry="2.6" fill="#f2f2f2" stroke="#1a1a1a" stroke-width="0.7"/>
<circle cx="533.50" cy="78.70" r="1.9" fill="#1a1a1a"/>
<circle cx="533.00" cy="78.20" r="0.6" fill="#7aa0d8"/>
<path d="M529.3 77.2 Q533.5 73.8 537.7 77.2" fill="none" stroke="#1a1a1a" stroke-width="0.9" />
<text x="543.30" y="81.11" font-size="6.7" fill="#ffffff" textLength="71.70" lengthAdjust="spacingAndGlyphs" >Corners (Fillet/Chamfer)</text>
<line x1="545.20" y1="120.00" x2="550.80" y2="120.00" stroke="#3a6ea5" stroke-width="1.9" />
<line x1="548.00" y1="117.20" x2="548.00" y2="122.80" stroke="#3a6ea5" stroke-width="1.9" />
<line x1="593.00" y1="120.00" x2="598.80" y2="120.00" stroke="#3a6ea5" stroke-width="1.9" />
<path d="M641.3 119.5 l3.6 -3.6 l3.6 3.6 h-2 v3.5 h-3.2 v-3.5 z" fill="#ebe9e7" stroke="#bdb9b5" stroke-width="0.5" />
<path d="M688 120 l3.6 3.6 l3.6 -3.6 h-2 v-3.5 h-3.2 v3.5 z" fill="#ebe9e7" stroke="#bdb9b5" stroke-width="0.5" />
<text x="524.70" y="138.21" font-size="6.7" fill="#2a2e30" textLength="75.30" lengthAdjust="spacingAndGlyphs" font-weight="bold" >Corners (Fillet/Chamfer)</text>
<text x="535.00" y="157.91" font-size="6.7" fill="#2e3436" textLength="12.50" lengthAdjust="spacingAndGlyphs" >Unit</text>
<rect x="550.80" y="146.70" width="34.50" height="18.00" fill="url(#gb)" rx="1.8" stroke="#cdc7c2" stroke-width="0.6" />
<text x="558.00" y="158.11" font-size="6.7" fill="#2e3436" textLength="7.50" lengthAdjust="spacingAndGlyphs" >px</text>
<path d="M573.3 154.5 h4.6 l-2.3 2.6 z" fill="#2e3436" />
<text x="535.20" y="180.41" font-size="6.7" fill="#2e3436" textLength="24.50" lengthAdjust="spacingAndGlyphs" >Method:</text>
<rect x="564.30" y="169.20" width="57.00" height="17.80" fill="url(#gb)" rx="1.8" stroke="#cdc7c2" stroke-width="0.6" />
<text x="571.00" y="180.61" font-size="6.7" fill="#2e3436" textLength="14.30" lengthAdjust="spacingAndGlyphs" >Auto</text>
<path d="M609.2 177 h4.6 l-2.3 2.6 z" fill="#2e3436" />
<text x="535.20" y="203.21" font-size="6.7" fill="#2e3436" textLength="21.10" lengthAdjust="spacingAndGlyphs" >Radius:</text>
<rect x="560.30" y="191.70" width="44.00" height="18.30" fill="#ffffff" rx="1.8" stroke="#cdc7c2" stroke-width="0.6" />
<text x="562.20" y="203.31" font-size="6.7" fill="#2e3436" textLength="21.30" lengthAdjust="spacingAndGlyphs" >2.0000</text>
<line x1="585.80" y1="192.20" x2="585.80" y2="209.60" stroke="#e8e5e2" stroke-width="0.5" />
<line x1="595.00" y1="192.20" x2="595.00" y2="209.60" stroke="#e8e5e2" stroke-width="0.5" />
<line x1="587.80" y1="200.90" x2="592.80" y2="200.90" stroke="#2e3436" stroke-width="1.0" />
<line x1="597.70" y1="200.90" x2="602.70" y2="200.90" stroke="#2e3436" stroke-width="1.0" />
<line x1="600.20" y1="198.40" x2="600.20" y2="203.40" stroke="#2e3436" stroke-width="1.0" />
<text x="535.20" y="225.71" font-size="6.7" fill="#2e3436" textLength="44.30" lengthAdjust="spacingAndGlyphs" >Chamfer steps:</text>
<rect x="582.30" y="214.00" width="37.70" height="18.20" fill="#ffffff" rx="1.8" stroke="#cdc7c2" stroke-width="0.6" />
<text x="585.20" y="225.81" font-size="6.7" fill="#2e3436" textLength="3.00" lengthAdjust="spacingAndGlyphs" >1</text>
<line x1="601.50" y1="214.50" x2="601.50" y2="231.80" stroke="#e8e5e2" stroke-width="0.5" />
<line x1="610.80" y1="214.50" x2="610.80" y2="231.80" stroke="#e8e5e2" stroke-width="0.5" />
<line x1="603.50" y1="223.40" x2="608.50" y2="223.40" stroke="#cfcdca" stroke-width="1.0" />
<line x1="613.00" y1="223.40" x2="618.00" y2="223.40" stroke="#2e3436" stroke-width="1.0" />
<line x1="615.50" y1="220.90" x2="615.50" y2="225.90" stroke="#2e3436" stroke-width="1.0" />
<rect x="534.20" y="236.10" width="8.80" height="8.80" fill="#ffffff" rx="1.4" stroke="#cdc7c2" stroke-width="0.6" />
<text x="545.70" y="243.01" font-size="6.7" fill="#2e3436" textLength="34.00" lengthAdjust="spacingAndGlyphs" >Radius in %</text>
<rect x="534.20" y="248.60" width="8.80" height="8.80" fill="#3584e4" rx="1.4" stroke="#1b6acb" stroke-width="0.5" />
<path d="M536 253.1 L537.9 255.1 L541.3 250.9" fill="none" stroke="#ffffff" stroke-width="1.2" />
<text x="545.70" y="255.51" font-size="6.7" fill="#2e3436" textLength="97.00" lengthAdjust="spacingAndGlyphs" >Use knots distance instead radius</text>
<rect x="534.20" y="261.10" width="8.80" height="8.80" fill="#3584e4" rx="1.4" stroke="#1b6acb" stroke-width="0.5" />
<path d="M536 265.6 L537.9 267.6 L541.3 263.4" fill="none" stroke="#ffffff" stroke-width="1.2" />
<text x="545.70" y="268.01" font-size="6.7" fill="#2e3436" textLength="79.50" lengthAdjust="spacingAndGlyphs" >Apply changes if radius = 0</text>
<rect x="534.20" y="273.60" width="8.80" height="8.80" fill="#3584e4" rx="1.4" stroke="#1b6acb" stroke-width="0.5" />
<path d="M536 278.1 L537.9 280.1 L541.3 275.9" fill="none" stroke="#ffffff" stroke-width="1.2" />
<text x="545.70" y="280.51" font-size="6.7" fill="#2e3436" textLength="79.50" lengthAdjust="spacingAndGlyphs" >Apply changes if radius &gt; 0</text>
<rect x="534.20" y="286.10" width="8.80" height="8.80" fill="#ffffff" rx="1.4" stroke="#cdc7c2" stroke-width="0.6" />
<text x="545.70" y="293.01" font-size="6.7" fill="#2e3436" textLength="82.50" lengthAdjust="spacingAndGlyphs" >Change only selected nodes</text>
<rect x="534.20" y="298.40" width="8.80" height="8.80" fill="#ffffff" rx="1.4" stroke="#cdc7c2" stroke-width="0.6" />
<text x="545.70" y="305.31" font-size="6.7" fill="#2e3436" textLength="31.30" lengthAdjust="spacingAndGlyphs" >Hide knots</text>
<rect x="533.00" y="310.70" width="88.00" height="18.60" fill="url(#gb)" rx="2" stroke="#cdc7c2" stroke-width="0.6" />
<text x="570.00" y="322.51" font-size="6.7" fill="#2e3436" textLength="14.30" lengthAdjust="spacingAndGlyphs" >Fillet</text>
<rect x="623.60" y="310.70" width="87.90" height="18.60" fill="url(#gb)" rx="2" stroke="#cdc7c2" stroke-width="0.6" />
<text x="649.70" y="322.51" font-size="6.7" fill="#2e3436" textLength="35.60" lengthAdjust="spacingAndGlyphs" >Inverse fillet</text>
<rect x="533.00" y="333.50" width="88.00" height="18.70" fill="url(#gb)" rx="2" stroke="#cdc7c2" stroke-width="0.6" />
<text x="564.00" y="345.36" font-size="6.7" fill="#2e3436" textLength="30.30" lengthAdjust="spacingAndGlyphs" >Chamfer</text>
<rect x="623.60" y="333.50" width="87.90" height="18.70" fill="url(#gb)" rx="2" stroke="#cdc7c2" stroke-width="0.6" />
<text x="643.30" y="345.36" font-size="6.7" fill="#2e3436" textLength="48.40" lengthAdjust="spacingAndGlyphs" >Inverse chamfer</text>
<path d="M535.2 360.2 v5 l2.8 -2.5 z" fill="#2e3436" />
<text x="540.70" y="365.11" font-size="6.7" fill="#2a2e30" textLength="76.60" lengthAdjust="spacingAndGlyphs" font-weight="bold" >Corners (Fillet/Chamfer)</text>
<text x="617.30" y="365.11" font-size="6.7" fill="#2e3436" textLength="68.40" lengthAdjust="spacingAndGlyphs" >: Set default parameters</text>
<line x1="718.40" y1="49.00" x2="718.40" y2="371.00" stroke="#dcd8d4" stroke-width="0.6" />
<path d="M727.2 57.2 h5 l2 2 v7 h-7 z" fill="#ffffff" stroke="#c9c5c0" stroke-width="0.5" />
<circle cx="734.00" cy="61.80" r="1.9" fill="#3b78c4"/>
<line x1="734.00" y1="60.80" x2="734.00" y2="62.80" stroke="#fff" stroke-width="0.6" />
<path d="M726.5 77.5 h3 l1 1.2 h5 v7 h-9 z" fill="#d9c690" stroke="#9a8650" stroke-width="0.5" />
<rect x="727.80" y="80.20" width="6.60" height="3.00" fill="#efe5c2" stroke="#a89868" stroke-width="0.3" />
<path d="M729.6 96 h2.8 v3 h1.8 l-3.2 3.2 l-3.2 -3.2 h1.8 z" fill="#e9e9e6" stroke="#777" stroke-width="0.5" />
<rect x="727.00" y="101.20" width="8.00" height="4.00" fill="#2f6fb5" rx="0.5" />
<rect x="727.20" y="116.30" width="7.60" height="3.00" fill="#444" />
<rect x="726.60" y="118.60" width="8.80" height="4.40" fill="#dcdcdc" stroke="#333" stroke-width="0.6" />
<rect x="728.20" y="121.60" width="5.60" height="3.00" fill="#fff" stroke="#333" stroke-width="0.5" />
<line x1="721.50" y1="133.70" x2="741.00" y2="133.70" stroke="#dedbd8" stroke-width="0.6" />
<path d="M728.5 142.5 h4 l2 2 v7.5 h-6 z" fill="#fff" stroke="#222" stroke-width="0.7" />
<path d="M725.5 147.5 h4.5 m-1.6 -1.6 l1.8 1.6 l-1.8 1.6" fill="none" stroke="#222" stroke-width="0.8" />
<path d="M727.5 162 h4 l2 2 v7.5 h-6 z" fill="#fff" stroke="#222" stroke-width="0.7" />
<path d="M731 167.5 h4.8 m-1.6 -1.6 l1.8 1.6 l-1.8 1.6" fill="none" stroke="#222" stroke-width="0.8" />
<line x1="721.50" y1="181.00" x2="741.00" y2="181.00" stroke="#dedbd8" stroke-width="0.6" />
<path d="M727 194.5 Q731 191.5 734.5 194.5 Q735.5 197 732.5 198" fill="none" stroke="#d9a520" stroke-width="1.5" />
<path d="M726 192.6 l3.6 0.2 l-1.8 3.4 z" fill="#d9a520" />
<path d="M735 214.5 Q731 211.5 727.5 214.5 Q726.5 217 729.5 218" fill="none" stroke="#cfe3cf" stroke-width="1.4" />
<path d="M736 212.6 l-3.6 0.2 l1.8 3.4 z" fill="#cfe3cf" />
<line x1="721.50" y1="228.00" x2="741.00" y2="228.00" stroke="#dedbd8" stroke-width="0.6" />
<rect x="727.20" y="238.00" width="5.20" height="5.60" fill="#e8e8e6" stroke="#666" stroke-width="0.5" />
<rect x="729.80" y="240.60" width="5.20" height="5.60" fill="#f4f4f2" stroke="#666" stroke-width="0.5" />
<path d="M728.2 257 L733 263 M733.8 257 L729 263" fill="none" stroke="#999" stroke-width="0.8" />
<circle cx="728.60" cy="264.40" r="1.9" fill="#d42a2a"/>
<circle cx="733.40" cy="264.40" r="1.9" fill="#d42a2a"/>
<rect x="727.00" y="278.20" width="8.00" height="8.40" fill="#c98b2b" stroke="#6b4a10" stroke-width="0.5" />
<rect x="729.00" y="277.20" width="4.00" height="1.80" fill="#888" />
<rect x="729.60" y="281.20" width="5.00" height="4.80" fill="#f3f3f0" stroke="#777" stroke-width="0.4" />
<line x1="721.50" y1="295.50" x2="741.00" y2="295.50" stroke="#dedbd8" stroke-width="0.6" />
<circle cx="730.60" cy="308.10" r="3.3" fill="#eef2f6" stroke="#444" stroke-width="0.8"/>
<line x1="733.00" y1="310.60" x2="735.30" y2="313.00" stroke="#222" stroke-width="1.3" />
<circle cx="730.60" cy="328.10" r="3.3" fill="#eef2f6" stroke="#444" stroke-width="0.8"/>
<line x1="733.00" y1="330.60" x2="735.30" y2="333.00" stroke="#222" stroke-width="1.3" />
<rect x="729.00" y="326.80" width="3.20" height="2.60" fill="#d9a520" />
<path d="M729.8 357.4 v5.2 l3 -2.6 z" fill="#2e3436" />
<rect x="745.30" y="52.00" width="20.50" height="18.80" fill="#d6d1cd" rx="2.2" />
<line x1="752.90" y1="59.10" x2="758.10" y2="63.90" stroke="#333" stroke-width="0.8" />
<circle cx="752.70" cy="58.90" r="1.5" fill="#4a4aff"/>
<circle cx="758.30" cy="64.10" r="1.5" fill="#3faa5a"/>
<path d="M755.7 63.5 l2.2 0.4 l-0.6 -2.2 z" fill="#222" />
<line x1="745.50" y1="75.30" x2="765.50" y2="75.30" stroke="#dedbd8" stroke-width="0.6" />
<line x1="752.90" y1="86.60" x2="758.10" y2="91.40" stroke="#333" stroke-width="0.8" />
<circle cx="752.70" cy="86.40" r="1.5" fill="#4a4aff"/>
<circle cx="758.30" cy="91.60" r="1.5" fill="#3faa5a"/>
<path d="M755.7 91 l2.2 0.4 l-0.6 -2.2 z" fill="#222" />
<path d="M752 109.5 h6 v-6" fill="none" stroke="#e6e3e0" stroke-width="0.6" />
<path d="M752 131 h6 v-6" fill="none" stroke="#e6e3e0" stroke-width="0.6" />
<path d="M752 150 h6 v-6" fill="none" stroke="#e6e3e0" stroke-width="0.6" />
<path d="M752 170 h6 v-6" fill="none" stroke="#e6e3e0" stroke-width="0.6" />
<line x1="745.50" y1="181.00" x2="765.50" y2="181.00" stroke="#dedbd8" stroke-width="0.6" />
<rect x="745.30" y="185.50" width="20.50" height="19.00" fill="#d6d1cd" rx="2.2" />
<line x1="752.90" y1="192.60" x2="758.10" y2="197.40" stroke="#333" stroke-width="0.8" />
<circle cx="752.70" cy="192.40" r="1.5" fill="#4a4aff"/>
<circle cx="758.30" cy="197.60" r="1.5" fill="#3faa5a"/>
<path d="M755.7 197 l2.2 0.4 l-0.6 -2.2 z" fill="#222" />
<path d="M751.5 210.5 Q757 210 758.5 216" fill="none" stroke="#3a9a3a" stroke-width="1.2" />
<path d="M756.3 215 l4.2 0.2 l-2.2 3.4 z" fill="#3a9a3a" />
<path d="M751.5 237.5 L759.5 229.8 M752 231 L759 236" fill="none" stroke="#333" stroke-width="0.6" />
<circle cx="755.50" cy="233.60" r="1.3" fill="#3a9a3a"/>
<rect x="745.30" y="245.00" width="20.50" height="18.80" fill="#d6d1cd" rx="2.2" />
<path d="M751.5 249.5 Q756 250.5 757 256" fill="none" stroke="#444" stroke-width="0.6" />
<circle cx="756.60" cy="257.00" r="1.5" fill="#3a9a3a"/>
<path d="M757.2 254 l2.2 1 l-1.6 1.8 z" fill="#222" />
<path d="M752.5 268.5 Q757 269.5 758 275" fill="none" stroke="#444" stroke-width="0.6" />
<rect x="753.60" y="270.30" width="2.40" height="2.40" fill="#3a9a3a" />
<path d="M756.8 274 l2.6 0.2 l-1.4 2.2 z" fill="#222" />
<line x1="752.50" y1="296.00" x2="758.80" y2="290.00" stroke="#c33" stroke-width="0.8" />
<circle cx="753.00" cy="295.60" r="1.5" fill="#d42a2a"/>
<circle cx="758.40" cy="290.40" r="1.5" fill="#d42a2a"/>
<circle cx="755.70" cy="293.00" r="1.3" fill="#3a9a3a"/>
<line x1="745.50" y1="307.50" x2="765.50" y2="307.50" stroke="#dedbd8" stroke-width="0.6" />
<rect x="745.30" y="312.00" width="20.50" height="18.70" fill="#d6d1cd" rx="2.2" />
<line x1="752.90" y1="318.90" x2="758.10" y2="323.70" stroke="#333" stroke-width="0.8" />
<circle cx="752.70" cy="318.70" r="1.5" fill="#4a4aff"/>
<circle cx="758.30" cy="323.90" r="1.5" fill="#3faa5a"/>
<path d="M755.7 323.3 l2.2 0.4 l-0.6 -2.2 z" fill="#222" />
<path d="M754.3 357.4 v5.2 l3 -2.6 z" fill="#2e3436" />
<rect x="0.00" y="371.30" width="768.00" height="11.40" fill="#f6f5f4" />
<rect x="0.00" y="371.30" width="10.68" height="11.40" fill="#ffffff" />
<path d="M0.3 371.6 L10.382284040995607 382.4 M10.382284040995607 371.6 L0.3 382.4" fill="none" stroke="#a83232" stroke-width="1.2" />
<rect x="10.68" y="371.30" width="10.73" height="11.40" fill="#000000" />
<rect x="21.36" y="371.30" width="10.73" height="11.40" fill="#1a1a1a" />
<rect x="32.05" y="371.30" width="10.73" height="11.40" fill="#333333" />
<rect x="42.73" y="371.30" width="10.73" height="11.40" fill="#4d4d4d" />
<rect x="53.41" y="371.30" width="10.73" height="11.40" fill="#666666" />
<rect x="64.09" y="371.30" width="10.73" height="11.40" fill="#808080" />
<rect x="74.78" y="371.30" width="10.73" height="11.40" fill="#999999" />
<rect x="85.46" y="371.30" width="10.73" height="11.40" fill="#b3b3b3" />
<rect x="96.14" y="371.30" width="10.73" height="11.40" fill="#cccccc" />
<rect x="106.82" y="371.30" width="10.73" height="11.40" fill="#e6e6e6" />
<rect x="117.51" y="371.30" width="10.73" height="11.40" fill="#ececec" />
<rect x="128.19" y="371.30" width="10.73" height="11.40" fill="#f2f2f2" />
<rect x="138.87" y="371.30" width="10.73" height="11.40" fill="#f9f9f9" />
<rect x="149.55" y="371.30" width="10.73" height="11.40" fill="#ffffff" />
<rect x="160.23" y="371.30" width="10.73" height="11.40" fill="#800000" />
<rect x="170.92" y="371.30" width="10.73" height="11.40" fill="#ff0000" />
<rect x="181.60" y="371.30" width="10.73" height="11.40" fill="#808000" />
<rect x="192.28" y="371.30" width="10.73" height="11.40" fill="#ffff00" />
<rect x="202.96" y="371.30" width="10.73" height="11.40" fill="#008000" />
<rect x="213.65" y="371.30" width="10.73" height="11.40" fill="#00ff00" />
<rect x="224.33" y="371.30" width="10.73" height="11.40" fill="#008080" />
<rect x="235.01" y="371.30" width="10.73" height="11.40" fill="#00ffff" />
<rect x="245.69" y="371.30" width="10.73" height="11.40" fill="#000080" />
<rect x="256.37" y="371.30" width="10.73" height="11.40" fill="#0000ff" />
<rect x="267.06" y="371.30" width="10.73" height="11.40" fill="#800080" />
<rect x="277.74" y="371.30" width="10.73" height="11.40" fill="#ff00ff" />
<rect x="288.42" y="371.30" width="10.73" height="11.40" fill="#2b0000" />
<rect x="299.10" y="371.30" width="10.73" height="11.40" fill="#550000" />
<rect x="309.79" y="371.30" width="10.73" height="11.40" fill="#800000" />
<rect x="320.47" y="371.30" width="10.73" height="11.40" fill="#aa0000" />
<rect x="331.15" y="371.30" width="10.73" height="11.40" fill="#d40000" />
<rect x="341.83" y="371.30" width="10.73" height="11.40" fill="#ff0000" />
<rect x="352.52" y="371.30" width="10.73" height="11.40" fill="#ff2a2a" />
<rect x="363.20" y="371.30" width="10.73" height="11.40" fill="#ff5555" />
<rect x="373.88" y="371.30" width="10.73" height="11.40" fill="#ff8080" />
<rect x="384.56" y="371.30" width="10.73" height="11.40" fill="#ffaaaa" />
<rect x="395.24" y="371.30" width="10.73" height="11.40" fill="#ffd5d5" />
<rect x="405.93" y="371.30" width="10.73" height="11.40" fill="#280b0b" />
<rect x="416.61" y="371.30" width="10.73" height="11.40" fill="#501616" />
<rect x="427.29" y="371.30" width="10.73" height="11.40" fill="#782121" />
<rect x="437.97" y="371.30" width="10.73" height="11.40" fill="#a02c2c" />
<rect x="448.66" y="371.30" width="10.73" height="11.40" fill="#c83737" />
<rect x="459.34" y="371.30" width="10.73" height="11.40" fill="#d35f5f" />
<rect x="470.02" y="371.30" width="10.73" height="11.40" fill="#de8787" />
<rect x="480.70" y="371.30" width="10.73" height="11.40" fill="#e9afaf" />
<rect x="491.39" y="371.30" width="10.73" height="11.40" fill="#f4d7d7" />
<rect x="502.07" y="371.30" width="10.73" height="11.40" fill="#241c1c" />
<rect x="512.75" y="371.30" width="10.73" height="11.40" fill="#483737" />
<rect x="523.43" y="371.30" width="10.73" height="11.40" fill="#6c5353" />
<rect x="534.11" y="371.30" width="10.73" height="11.40" fill="#916f6f" />
<rect x="544.80" y="371.30" width="10.73" height="11.40" fill="#ac9393" />
<rect x="555.48" y="371.30" width="10.73" height="11.40" fill="#c8b7b7" />
<rect x="566.16" y="371.30" width="10.73" height="11.40" fill="#e3dbdb" />
<rect x="576.84" y="371.30" width="10.73" height="11.40" fill="#2b1100" />
<rect x="587.53" y="371.30" width="10.73" height="11.40" fill="#552200" />
<rect x="598.21" y="371.30" width="10.73" height="11.40" fill="#803300" />
<rect x="608.89" y="371.30" width="10.73" height="11.40" fill="#aa4400" />
<rect x="619.57" y="371.30" width="10.73" height="11.40" fill="#d45500" />
<rect x="630.25" y="371.30" width="10.73" height="11.40" fill="#ff6600" />
<rect x="640.94" y="371.30" width="10.73" height="11.40" fill="#ff7f2a" />
<rect x="651.62" y="371.30" width="10.73" height="11.40" fill="#ff9955" />
<rect x="662.30" y="371.30" width="10.73" height="11.40" fill="#ffb380" />
<rect x="672.98" y="371.30" width="10.73" height="11.40" fill="#ffccaa" />
<rect x="683.67" y="371.30" width="10.73" height="11.40" fill="#ffe6d5" />
<rect x="694.35" y="371.30" width="10.73" height="11.40" fill="#28170b" />
<rect x="705.03" y="371.30" width="10.73" height="11.40" fill="#502d16" />
<rect x="715.71" y="371.30" width="10.73" height="11.40" fill="#784421" />
<rect x="726.40" y="371.30" width="10.73" height="11.40" fill="#a05a2c" />
<rect x="737.08" y="371.30" width="10.73" height="11.40" fill="#c87137" />
<path d="M759.3 378.4 v5 l-2.8 -2.5 z" fill="#2e3436" />
<rect x="0.00" y="382.70" width="748.00" height="7.00" fill="#cfcfcf" />
<rect x="1.50" y="385.00" width="117.50" height="3.20" fill="#7c7c7c" rx="1.5" />
<rect x="0.00" y="389.70" width="768.00" height="19.60" fill="#f6f5f4" />
<text x="1.60" y="397.60" font-size="6.4" fill="#2e3436" textLength="8.80" lengthAdjust="spacingAndGlyphs" >Fill:</text>
<text x="1.60" y="407.00" font-size="6.4" fill="#2e3436" textLength="19.00" lengthAdjust="spacingAndGlyphs" >Stroke:</text>
<rect x="23.80" y="390.50" width="17.50" height="9.30" fill="#008000" />
<rect x="23.80" y="399.80" width="17.50" height="9.30" fill="#000000" />
<text x="44.00" y="407.01" font-size="6.7" fill="#7c7f80" textLength="14.20" lengthAdjust="spacingAndGlyphs" >2.96</text>
<text x="59.30" y="402.41" font-size="6.7" fill="#2e3436" textLength="5.70" lengthAdjust="spacingAndGlyphs" >O:</text>
<rect x="67.50" y="390.50" width="36.70" height="18.20" fill="#ffffff" rx="1.8" stroke="#e3e0dd" stroke-width="0.5" />
<text x="69.20" y="402.51" font-size="6.7" fill="#2e3436" textLength="11.40" lengthAdjust="spacingAndGlyphs" >100</text>
<line x1="85.60" y1="391.00" x2="85.60" y2="408.30" stroke="#ebe8e5" stroke-width="0.5" />
<line x1="95.20" y1="391.00" x2="95.20" y2="408.30" stroke="#ebe8e5" stroke-width="0.5" />
<line x1="88.20" y1="400.10" x2="92.80" y2="400.10" stroke="#3a3e40" stroke-width="0.9" />
<line x1="97.70" y1="400.10" x2="102.30" y2="400.10" stroke="#d6d4d1" stroke-width="0.9" />
<line x1="100.00" y1="397.80" x2="100.00" y2="402.40" stroke="#d6d4d1" stroke-width="0.9" />
<ellipse cx="117.8" cy="400.4" rx="3.9" ry="2.4" fill="#f2f2f2" stroke="#1a1a1a" stroke-width="0.7"/>
<circle cx="117.80" cy="400.50" r="1.8" fill="#1a1a1a"/>
<path d="M114 398.8 Q117.8 395.6 121.6 398.8" fill="none" stroke="#1a1a1a" stroke-width="0.9" />
<path d="M115.2 397 l-0.6 -1.2 M117.8 396.4 v-1.4 M120.4 397 l0.6 -1.2" fill="none" stroke="#1a1a1a" stroke-width="0.5" />
<path d="M136.4 399.5 V397.8 Q136.4 396 138.2 396 Q140 396 140 397.4" fill="none" stroke="#555" stroke-width="0.8" />
<rect x="135.60" y="399.20" width="5.40" height="4.80" fill="#f3dfae" rx="0.5" stroke="#9a7a2a" stroke-width="0.5" />
<rect x="137.90" y="400.60" width="0.90" height="2.00" fill="#7a5a15" />
<rect x="148.50" y="391.40" width="43.80" height="16.80" fill="url(#gb)" rx="1.8" stroke="#dad6d2" stroke-width="0.6" />
<text x="155.80" y="402.02" font-size="5.6" fill="#2e3436" textLength="21.20" lengthAdjust="spacingAndGlyphs" font-weight="bold" >•Layer 1</text>
<path d="M180.4 398.8 h4.6 l-2.3 2.6 z" fill="#2e3436" />
<text x="193.70" y="402.71" font-size="6.7" fill="#2e3436" textLength="208.00" lengthAdjust="spacingAndGlyphs" >Drag to select objects to edit, click to edit this object (more: Shift)</text>
<text x="583.70" y="397.70" font-size="6.4" fill="#2e3436" textLength="6.00" lengthAdjust="spacingAndGlyphs" >X:</text>
<text x="595.30" y="397.81" font-size="6.7" fill="#2e3436" textLength="23.40" lengthAdjust="spacingAndGlyphs" >-288.82</text>
<text x="583.70" y="407.00" font-size="6.4" fill="#2e3436" textLength="6.00" lengthAdjust="spacingAndGlyphs" >Y:</text>
<text x="599.30" y="407.11" font-size="6.7" fill="#2e3436" textLength="19.40" lengthAdjust="spacingAndGlyphs" >195.17</text>
<text x="625.30" y="402.51" font-size="6.7" fill="#2e3436" textLength="5.70" lengthAdjust="spacingAndGlyphs" >Z:</text>
<rect x="636.30" y="390.60" width="52.40" height="18.10" fill="#ffffff" rx="1.8" stroke="#e3e0dd" stroke-width="0.5" />
<text x="643.00" y="402.51" font-size="6.7" fill="#2e3436" textLength="14.70" lengthAdjust="spacingAndGlyphs" >34%</text>
<line x1="664.00" y1="391.00" x2="664.00" y2="408.30" stroke="#ebe8e5" stroke-width="0.5" />
<line x1="675.60" y1="391.00" x2="675.60" y2="408.30" stroke="#ebe8e5" stroke-width="0.5" />
<line x1="667.30" y1="400.10" x2="672.30" y2="400.10" stroke="#2e3436" stroke-width="0.9" />
<line x1="678.90" y1="400.10" x2="683.90" y2="400.10" stroke="#2e3436" stroke-width="0.9" />
<line x1="681.40" y1="397.60" x2="681.40" y2="402.60" stroke="#2e3436" stroke-width="0.9" />
<text x="693.70" y="402.51" font-size="6.7" fill="#2e3436" textLength="5.90" lengthAdjust="spacingAndGlyphs" >R:</text>
<rect x="0.00" y="409.20" width="768.00" height="22.80" fill="url(#gtb)" />
<rect x="0.00" y="409.20" width="768.00" height="22.80" fill="url(#gtbv)" />
<line x1="0.00" y1="409.40" x2="768.00" y2="409.40" stroke="#8298b3" stroke-width="0.5" />
<circle cx="15.30" cy="420.60" r="9.6" fill="url(#orb)" stroke="#27507f" stroke-width="0.8"/>
<path d="M6.6 417.5 Q15.3 410.5 24 417.5 Q15.3 414.5 6.6 417.5 Z" fill="#ffffff" opacity="0.35" />
<path d="M10.4 416.6 Q12.6 415.2 14.8 416.4 L14.2 420.2 Q12 419.2 9.8 420.4 Z" fill="#e8572a" />
<path d="M16 416.6 Q18.2 417.8 20.6 416.6 L20 420.4 Q17.6 421.6 15.4 420.4 Z" fill="#7fc241" />
<path d="M9.6 421.4 Q11.8 420.2 14 421.4 L13.4 425.2 Q11.2 424 9 425.2 Z" fill="#3a9ee4" />
<path d="M15.2 421.6 Q17.4 422.8 19.8 421.6 L19.2 425.4 Q16.8 426.6 14.6 425.4 Z" fill="#f7c52e" />
<rect x="33.80" y="410.00" width="32.60" height="21.60" fill="url(#gtk)" rx="1.5" stroke="#e4eefa" stroke-width="0.7" opacity="0.92" />
<rect x="33.30" y="409.60" width="33.60" height="22.40" fill="none" rx="1.8" stroke="#7f97b5" stroke-width="0.5" opacity="0.8" />
<rect x="68.60" y="410.00" width="32.70" height="21.60" fill="url(#gtk)" rx="1.5" stroke="#e4eefa" stroke-width="0.7" opacity="0.92" />
<rect x="68.10" y="409.60" width="33.70" height="22.40" fill="none" rx="1.8" stroke="#7f97b5" stroke-width="0.5" opacity="0.8" />
<rect x="103.70" y="410.00" width="33.30" height="21.60" fill="url(#gtw)" rx="1.5" stroke="#e4eefa" stroke-width="0.7" opacity="0.92" />
<rect x="103.20" y="409.60" width="34.30" height="22.40" fill="none" rx="1.8" stroke="#7f97b5" stroke-width="0.5" opacity="0.8" />
<rect x="138.50" y="410.00" width="33.00" height="21.60" fill="url(#gta)" rx="1.5" stroke="#e4eefa" stroke-width="0.7" opacity="0.92" />
<rect x="138.00" y="409.60" width="34.00" height="22.40" fill="none" rx="1.8" stroke="#7f97b5" stroke-width="0.5" opacity="0.8" />
<rect x="173.00" y="410.00" width="32.20" height="21.60" fill="url(#gtk)" rx="1.5" stroke="#e4eefa" stroke-width="0.7" opacity="0.92" />
<rect x="172.50" y="409.60" width="33.20" height="22.40" fill="none" rx="1.8" stroke="#7f97b5" stroke-width="0.5" opacity="0.8" />
<path d="M41 413.6 h6.4 l1 1.3 h10.4 v14.6 h-17.8 z" fill="#f0d98a" stroke="#c9aa55" stroke-width="0.5" />
<rect x="42.00" y="416.60" width="15.80" height="5.60" fill="#f8ecb8" />
<rect x="44.00" y="422.80" width="12.00" height="6.20" fill="#8fb9e6" rx="0.8" />
<rect x="47.20" y="425.80" width="5.60" height="2.40" fill="#4f8fd6" rx="0.6" />
<circle cx="44.00" cy="413.80" r="0.8" fill="#4caf50"/>
<circle cx="54.00" cy="415.40" r="0.8" fill="#e4a43a"/>
<circle cx="85.00" cy="420.90" r="8.6" fill="#ffffff"/>
<path d="M85 420.9 L77.55 416.60 A8.6 8.6 0 0 1 92.45 416.60 Z" fill="#db4437" />
<path d="M85 420.9 L92.45 416.60 A8.6 8.6 0 0 1 85.00 429.50 Z" fill="#f4c20d" />
<path d="M85 420.9 L85.00 429.50 A8.6 8.6 0 0 1 77.55 416.60 Z" fill="#0f9d58" />
<circle cx="85.00" cy="420.90" r="4.1" fill="#ffffff"/>
<circle cx="85.00" cy="420.90" r="3.3" fill="#4285f4"/>
<path d="M111.6 413 H127.6 V424.6 L124.2 428.4 H111.6 Z" fill="#fbfcfe" stroke="#c9d6e8" stroke-width="0.4" />
<path d="M127.6 424.6 H124.2 V428.4 Z" fill="#d5dfec" />
<text x="112.80" y="423.18" font-size="10.5" fill="#2458a8" textLength="10.80" lengthAdjust="spacingAndGlyphs" font-weight="bold" >W</text>
<path d="M155 412.6 L163.6 420.4 Q164.8 421.9 162.8 422.6 L160.2 423.4 L162.4 425.4 L158.4 426.4 L159.6 428.2 L157 429 L155 428 L153 429 L150.4 428.2 L151.6 426.4 L147.6 425.4 L149.8 423.4 L147.2 422.6 Q145.2 421.9 146.4 420.4 Z" fill="#1a1a1a" />
<path d="M155 414.6 L158.6 418 L156.8 419.4 L155 418 L153.2 419.4 L151.4 418 Z" fill="#ffffff" opacity="0.85" />
<ellipse cx="187.5" cy="422.6" rx="7.2" ry="5.6" fill="#e6eef8" stroke="#9fb3cf" stroke-width="0.6" transform="rotate(-15 187.5 422.6)"/>
<circle cx="183.60" cy="421.40" r="1.1" fill="#e4572e"/>
<circle cx="186.40" cy="419.40" r="1.1" fill="#f7c52e"/>
<circle cx="189.60" cy="419.60" r="1.1" fill="#4caf50"/>
<circle cx="184.40" cy="424.60" r="1.1" fill="#3a7bd5"/>
<path d="M190 429.5 L195.4 414.8 L196.8 415.4 L191.4 430 Z" fill="#d9893a" stroke="#8a4a1a" stroke-width="0.3" />
<path d="M195.2 415 L196.2 411.6 L197.4 412 L196.9 415.5 Z" fill="#e0c080" />
<rect x="626.60" y="417.20" width="7.60" height="8.00" fill="#2ea3f2" rx="0.8" />
<path d="M628 422.5 l2.2 -2.4 l2.4 2.4" fill="none" stroke="#bfe4ff" stroke-width="0.7" />
<rect x="642.00" y="417.40" width="5.60" height="8.00" fill="#f0f0ee" rx="0.8" stroke="#777" stroke-width="0.4" />
<rect x="644.80" y="416.60" width="2.60" height="3.40" fill="#555" />
<circle cx="656.60" cy="420.80" r="2.9" fill="#f0f0ee"/>
<circle cx="658.40" cy="423.40" r="2.4" fill="#d8282f"/>
<circle cx="670.00" cy="421.30" r="4" fill="#3fae2a"/>
<text x="668.40" y="423.52" font-size="5.6" fill="#ffffff" font-weight="bold" >µ</text>
<rect x="679.40" y="417.20" width="3.60" height="3.80" fill="#e4572e" />
<rect x="683.20" y="417.20" width="3.60" height="3.80" fill="#3a7bd5" />
<rect x="679.40" y="421.20" width="3.60" height="4.20" fill="#4caf50" />
<rect x="683.20" y="421.20" width="3.60" height="4.20" fill="#f7c52e" />
<path d="M694.4 417 v8.6" fill="none" stroke="#f4f4f4" stroke-width="0.8" />
<path d="M694.8 417.2 h5.2 l-1 1.8 l1 1.8 h-5.2 z" fill="#ffffff" />
<rect x="706.40" y="423.80" width="1.40" height="1.60" fill="#e8eef5" opacity="0.9" />
<rect x="708.50" y="422.40" width="1.40" height="3.00" fill="#e8eef5" opacity="0.9" />
<rect x="710.60" y="421.00" width="1.40" height="4.40" fill="#e8eef5" opacity="0.9" />
<rect x="712.70" y="419.60" width="1.40" height="5.80" fill="#e8eef5" opacity="0.9" />
<text x="728.00" y="418.81" font-size="6.7" fill="#ffffff" textLength="23.30" lengthAdjust="spacingAndGlyphs" >6:37 PM</text>
<text x="725.30" y="428.21" font-size="6.7" fill="#ffffff" textLength="28.40" lengthAdjust="spacingAndGlyphs" >6/27/2021</text>
<rect x="760.20" y="409.60" width="7.80" height="22.40" fill="#6d7f9b" stroke="#8a9bb5" stroke-width="0.5" />
<rect x="1.00" y="93.00" width="82.60" height="22.00" fill="#2b2b2b" rx="3" opacity="0.92" />
<text x="8.00" y="107.11" font-size="6.7" fill="#ffffff" textLength="69.00" lengthAdjust="spacingAndGlyphs" >Edit paths by nodes (N)</text>
<rect x="705.30" y="390.90" width="57.40" height="17.80" fill="#ffffff" rx="1.5" stroke="#8c8f94" stroke-width="0.6" />
<rect x="705.80" y="400.00" width="56.40" height="8.40" fill="#e6ecf6" opacity="0.8" />
<text x="708.20" y="398.11" font-size="6.7" fill="#3c3c3c" textLength="52.10" lengthAdjust="spacingAndGlyphs" >AndroidAP998F  2</text>
<text x="708.20" y="406.70" font-size="6.4" fill="#7f7f7f" textLength="42.40" lengthAdjust="spacingAndGlyphs" font-style="italic" >Internet access</text>
</svg>
</body></html>
